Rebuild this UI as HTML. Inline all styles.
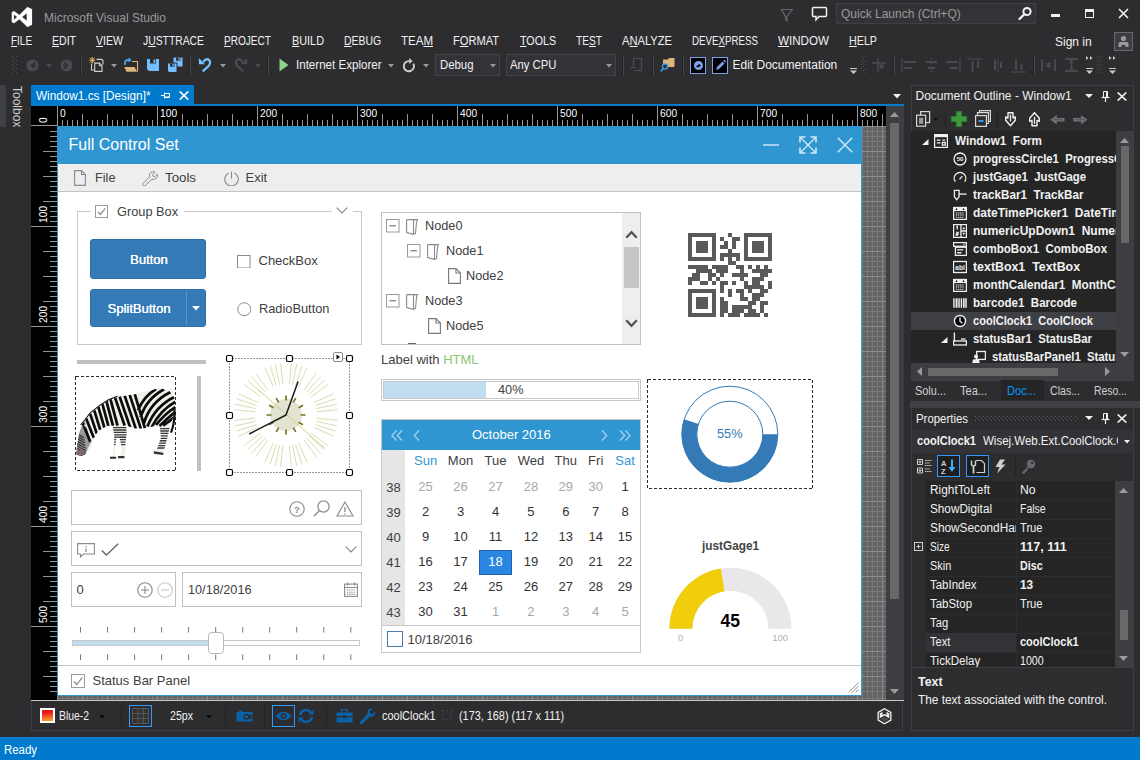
<!DOCTYPE html>
<html lang="en"><head><meta charset="utf-8"><title>Microsoft Visual Studio</title>
<style>
html,body{margin:0;padding:0;background:#2d2d30}
body{width:1140px;height:760px;overflow:hidden;position:relative;font-family:"Liberation Sans",sans-serif}
.a{position:absolute;display:block}
.t{position:absolute;white-space:pre;line-height:1;transform-origin:0 0}
u{text-decoration-thickness:1px;text-underline-offset:1px}
.grip{background-image:radial-gradient(circle at 0.500px 0.500px,#505055 0.500px,transparent 0.800px),radial-gradient(circle at 2.500px 2.500px,#505055 0.500px,transparent 0.800px);background-size:4px 4px}
.grip2{background-image:radial-gradient(circle at 0.500px 0.500px,#5c5c62 0.500px,transparent 0.800px),radial-gradient(circle at 2.500px 2.500px,#5c5c62 0.500px,transparent 0.800px);background-size:4px 4px}
.gridbg{background-color:#636363;background-image:linear-gradient(90deg,#8c8c8c 1px,transparent 1px),linear-gradient(#8c8c8c 1px,transparent 1px),linear-gradient(#787878 1px,transparent 1px),linear-gradient(90deg,#787878 1px,transparent 1px);background-size:25px 25px,25px 25px,5px 5px,5px 5px}
</style></head>
<body>
<svg class="a" style="left:11px;top:6px;" width="22" height="22" viewBox="0 0 22 22"><path fill="#ffffff" fill-rule="evenodd" stroke="#ffffff" stroke-width="0.200" stroke-linejoin="round" d="M16.400 0.900 21 3.200V18.700L16.400 21 8.400 13.200 2.900 17.200 0.800 16.100V6.400L2.900 5.100 8.400 9ZM2.900 8.500V13.900L6.100 11.100ZM15.800 7.200V14.800L11.100 11.100Z"/></svg>
<span class="t" style="left:44px;top:11px;font-size:13px;color:#999999;transform:scaleX(0.924);">Microsoft Visual Studio</span>
<svg class="a" style="left:779px;top:8px;" width="14" height="14" viewBox="0 0 14 14"><path d="M1.5 1.5H12.5L7 8.5V13L5.5 11.5V8.5Z" fill="none" stroke="#6a6a6e" stroke-width="1.1" transform="translate(1,0)"/></svg>
<svg class="a" style="left:811px;top:6px;" width="17" height="16" viewBox="0 0 17 16"><path d="M2.5 1.5H14.5Q15.5 1.5 15.5 2.5V9.5Q15.5 10.5 14.5 10.5H8L5 13.8V10.5H2.5Q1.5 10.5 1.5 9.5V2.5Q1.5 1.5 2.5 1.5Z" fill="none" stroke="#f1f1f1" stroke-width="1.5"/></svg>
<div class="a" style="left:836px;top:3px;width:200px;height:21px;background:#333337;border:1px solid #3f3f46;box-sizing:border-box;"></div>
<span class="t" style="left:841px;top:8px;font-size:12px;color:#999999;">Quick Launch (Ctrl+Q)</span>
<svg class="a" style="left:1017px;top:6px;" width="16" height="16" viewBox="0 0 16 16"><circle cx="10" cy="5.5" r="3.6" fill="none" stroke="#f1f1f1" stroke-width="2"/><path d="M7.5 8 2.5 13" stroke="#f1f1f1" stroke-width="2.4" stroke-linecap="round"/></svg>
<div class="a" style="left:1051px;top:14px;width:9px;height:3px;background:#f1f1f1;"></div>
<div class="a" style="left:1085px;top:9px;width:9px;height:9px;border:1px solid #f1f1f1;border-top:3px solid #f1f1f1;box-sizing:border-box;"></div>
<svg class="a" style="left:1118px;top:8px;" width="11" height="11" viewBox="0 0 11 11"><path d="M1 1 10 10M10 1 1 10" stroke="#f1f1f1" stroke-width="1.6"/></svg>
<span class="t" style="left:11px;top:35px;font-size:12px;color:#f1f1f1;transform:scaleX(0.829);"><u>F</u>ILE</span>
<span class="t" style="left:52px;top:35px;font-size:12px;color:#f1f1f1;transform:scaleX(0.878);"><u>E</u>DIT</span>
<span class="t" style="left:96px;top:35px;font-size:12px;color:#f1f1f1;transform:scaleX(0.880);"><u>V</u>IEW</span>
<span class="t" style="left:143px;top:35px;font-size:12px;color:#f1f1f1;transform:scaleX(0.863);">J<u>U</u>STTRACE</span>
<span class="t" style="left:224px;top:35px;font-size:12px;color:#f1f1f1;transform:scaleX(0.839);"><u>P</u>ROJECT</span>
<span class="t" style="left:292px;top:35px;font-size:12px;color:#f1f1f1;transform:scaleX(0.905);"><u>B</u>UILD</span>
<span class="t" style="left:344px;top:35px;font-size:12px;color:#f1f1f1;transform:scaleX(0.867);"><u>D</u>EBUG</span>
<span class="t" style="left:401px;top:35px;font-size:12px;color:#f1f1f1;transform:scaleX(0.960);">TEA<u>M</u></span>
<span class="t" style="left:453px;top:35px;font-size:12px;color:#f1f1f1;transform:scaleX(0.924);">F<u>O</u>RMAT</span>
<span class="t" style="left:520px;top:35px;font-size:12px;color:#f1f1f1;transform:scaleX(0.890);"><u>T</u>OOLS</span>
<span class="t" style="left:576px;top:35px;font-size:12px;color:#f1f1f1;transform:scaleX(0.848);">TE<u>S</u>T</span>
<span class="t" style="left:622px;top:35px;font-size:12px;color:#f1f1f1;transform:scaleX(0.929);">A<u>N</u>ALYZE</span>
<span class="t" style="left:692px;top:35px;font-size:12px;color:#f1f1f1;transform:scaleX(0.811);">DEVE<u>X</u>PRESS</span>
<span class="t" style="left:778px;top:35px;font-size:12px;color:#f1f1f1;transform:scaleX(0.969);"><u>W</u>INDOW</span>
<span class="t" style="left:849px;top:35px;font-size:12px;color:#f1f1f1;transform:scaleX(0.893);"><u>H</u>ELP</span>
<span class="t" style="left:1055px;top:36px;font-size:12px;color:#f1f1f1;">Sign in</span>
<div class="a" style="left:1114px;top:32px;width:19px;height:19px;background:#3e3e42;border:1px solid #6a6a6e;box-sizing:border-box;"></div>
<svg class="a" style="left:1116px;top:34px;" width="15" height="15" viewBox="0 0 15 15"><circle cx="7.5" cy="4.5" r="2.6" fill="#9a9a9e"/><path d="M2.5 13V9.5Q2.5 8 4 8H11Q12.5 8 12.5 9.5V13H9.5V11H5.5V13Z" fill="#9a9a9e"/></svg>
<div class="a grip" style="left:12px;top:56px;width:5px;height:18px"></div>
<svg class="a" style="left:25.5px;top:58.5px;" width="13" height="13" viewBox="0 0 13 13"><circle cx="6.5" cy="6.5" r="6" fill="#4b4b4f"/><path d="M9 3.5 5.5 6.5 9 9.5M5.8 6.5H10" stroke="#2d2d30" stroke-width="1.6" fill="none"/></svg>
<svg class="a" style="left:59.5px;top:58.5px;" width="13" height="13" viewBox="0 0 13 13"><circle cx="6.5" cy="6.5" r="6" fill="#4b4b4f"/><path d="M4 3.5 7.5 6.5 4 9.5M7.2 6.5H3" stroke="#2d2d30" stroke-width="1.6" fill="none"/></svg>
<svg class="a" style="left:46px;top:64px;" width="6" height="3.5" viewBox="0 0 6 3.5"><path d="M0 0H6L3.0 3.5Z" fill="#4b4b4f"/></svg>
<div class="a" style="left:80px;top:55px;width:1px;height:20px;background:#222224;"></div><div class="a" style="left:81px;top:55px;width:1px;height:20px;background:#46464a;"></div>
<svg class="a" style="left:89px;top:57px;" width="16" height="16" viewBox="0 0 16 16"><path d="M1 0.700 5.500 5.700M5.500 0.700 1 5.700M3.250 0V6.400M0.300 3.200H6.200" stroke="#e8b860" stroke-width="1"/><path d="M7.500 2.400H12Q14 2.400 14 4.400V7.500" stroke="#d0d0d0" fill="none" stroke-width="1.100"/><path d="M2.500 6.500V13H5" stroke="#d0d0d0" fill="none" stroke-width="1.100"/><path d="M5.700 6.100H10.500L13 8.600V14.400H5.700Z" fill="#2d2d30" stroke="#d0d0d0" stroke-width="1.100"/><path d="M10.300 6.100V8.800H13" fill="none" stroke="#d0d0d0" stroke-width="1"/></svg>
<svg class="a" style="left:111px;top:64px;" width="6" height="3.5" viewBox="0 0 6 3.5"><path d="M0 0H6L3.0 3.5Z" fill="#999999"/></svg>
<svg class="a" style="left:123px;top:57px;" width="16" height="16" viewBox="0 0 16 16"><path d="M9 4.500H14.500V14.500" fill="none" stroke="#dcb67a" stroke-width="1.100"/><path d="M1.300 10H11.500L14.200 14.800H3.600Z" fill="#dcb67a"/><path d="M2 7.800Q1.300 3.200 5 3H6.500" fill="none" stroke="#4aa5ee" stroke-width="1.800"/><path d="M5.500 0.400 8.700 3 5.500 5.600Z" fill="#4aa5ee"/></svg>
<svg class="a" style="left:146px;top:58px;" width="14" height="14" viewBox="0 0 14 14"><path d="M1 1H13V13H3L1 11Z" fill="#75beff"/><rect x="4" y="1" width="6" height="4.5" fill="#2d2d30"/><rect x="7.5" y="1.6" width="1.8" height="3.2" fill="#75beff"/></svg>
<svg class="a" style="left:167px;top:57px;" width="16" height="16" viewBox="0 0 16 16"><path d="M6.5 0.5H15.5V9.5H8L6.5 8Z" fill="#75beff"/><rect x="9" y="0.5" width="4.5" height="3.2" fill="#2d2d30"/><rect x="11.5" y="1" width="1.3" height="2.2" fill="#75beff"/><path d="M0.5 6H10V15.500H2L0.500 14Z" fill="#75beff" stroke="#2d2d30" stroke-width="1"/><rect x="3" y="6.500" width="4.500" height="3.200" fill="#2d2d30"/><rect x="5.500" y="7" width="1.300" height="2.200" fill="#75beff"/></svg>
<div class="a" style="left:189px;top:55px;width:1px;height:20px;background:#222224;"></div><div class="a" style="left:190px;top:55px;width:1px;height:20px;background:#46464a;"></div>
<svg class="a" style="left:197px;top:57px;" width="15" height="16" viewBox="0 0 15 16"><path d="M1.900 1V7.200H8.200Z" fill="#75beff"/><path d="M6.200 4.800Q8.500 1.600 11.300 2.400Q14.600 4.200 12 8.500L5.800 14.300" fill="none" stroke="#75beff" stroke-width="2.300"/></svg>
<svg class="a" style="left:220px;top:64px;" width="6" height="3.5" viewBox="0 0 6 3.5"><path d="M0 0H6L3.0 3.5Z" fill="#999999"/></svg>
<svg class="a" style="left:233.5px;top:57px;" width="15" height="16" viewBox="0 0 15 16"><g transform="translate(15,0) scale(-1,1)"><path d="M1.900 1V7.200H8.200Z" fill="#4b4b4f"/><path d="M6.200 4.800Q8.500 1.600 11.300 2.400Q14.600 4.200 12 8.500L5.800 14.300" fill="none" stroke="#4b4b4f" stroke-width="2.300"/></g></svg>
<svg class="a" style="left:255px;top:64px;" width="6" height="3.5" viewBox="0 0 6 3.5"><path d="M0 0H6L3.0 3.5Z" fill="#4b4b4f"/></svg>
<div class="a" style="left:267px;top:55px;width:1px;height:20px;background:#222224;"></div><div class="a" style="left:268px;top:55px;width:1px;height:20px;background:#46464a;"></div>
<svg class="a" style="left:279px;top:58px;" width="10" height="14" viewBox="0 0 10 14"><path d="M0.500 0.500 9.500 7 0.500 13.500Z" fill="#8ad48a"/></svg>
<span class="t" style="left:296px;top:59px;font-size:12px;color:#f1f1f1;transform:scaleX(0.964);">Internet Explorer</span>
<svg class="a" style="left:388px;top:64px;" width="6" height="3.5" viewBox="0 0 6 3.5"><path d="M0 0H6L3.0 3.5Z" fill="#999999"/></svg>
<svg class="a" style="left:402px;top:57px;" width="14" height="16" viewBox="0 0 14 16"><path d="M11.300 6.650A5.100 5.100 0 1 1 7.200 4.100" fill="none" stroke="#d0d0d0" stroke-width="1.900"/><path d="M7.200 0.900V7L10.600 4Z" fill="#d0d0d0"/></svg>
<svg class="a" style="left:423px;top:64px;" width="6" height="3.5" viewBox="0 0 6 3.5"><path d="M0 0H6L3.0 3.5Z" fill="#999999"/></svg>
<div class="a" style="left:435px;top:54px;width:65px;height:22px;background:#333337;border:1px solid #434346;box-sizing:border-box;"></div>
<span class="t" style="left:440px;top:59px;font-size:12px;color:#f1f1f1;transform:scaleX(0.947);">Debug</span>
<svg class="a" style="left:490px;top:64px;" width="6" height="3.5" viewBox="0 0 6 3.5"><path d="M0 0H6L3.0 3.5Z" fill="#999999"/></svg>
<div class="a" style="left:506px;top:54px;width:110px;height:22px;background:#333337;border:1px solid #434346;box-sizing:border-box;"></div>
<span class="t" style="left:510px;top:59px;font-size:12px;color:#f1f1f1;transform:scaleX(0.942);">Any CPU</span>
<svg class="a" style="left:606px;top:64px;" width="6" height="3.5" viewBox="0 0 6 3.5"><path d="M0 0H6L3.0 3.5Z" fill="#999999"/></svg>
<div class="a" style="left:622px;top:55px;width:1px;height:20px;background:#222224;"></div><div class="a" style="left:623px;top:55px;width:1px;height:20px;background:#46464a;"></div>
<svg class="a" style="left:630px;top:57px;" width="14" height="16" viewBox="0 0 14 16"><path d="M3.500 9V1.500H11.500V14" fill="none" stroke="#4b4b4f" stroke-width="1.200"/><path d="M1 10.500H6M3 8.500 1 10.500 3 12.500M4 13.500H11M9 11.500 11 13.500 9 15.500" fill="none" stroke="#4b4b4f" stroke-width="1"/></svg>
<div class="a" style="left:652px;top:55px;width:1px;height:20px;background:#222224;"></div><div class="a" style="left:653px;top:55px;width:1px;height:20px;background:#46464a;"></div>
<svg class="a" style="left:660px;top:57px;" width="16" height="16" viewBox="0 0 16 16"><path d="M3 2.500H8L9 1H14.500V10H3Z" fill="#dcb67a"/><circle cx="5" cy="9.500" r="2.600" fill="#2d2d30" stroke="#3b9aec" stroke-width="1.400"/><path d="M3.200 11.500 0.800 14.500" stroke="#3b9aec" stroke-width="1.600"/></svg>
<div class="a" style="left:682px;top:55px;width:1px;height:20px;background:#222224;"></div><div class="a" style="left:683px;top:55px;width:1px;height:20px;background:#46464a;"></div>
<div class="a" style="left:690px;top:57px;width:16px;height:17px;background:#000;border:1px solid #7d9eea;box-sizing:border-box;"></div>
<svg class="a" style="left:689.5px;top:57px;" width="17" height="17" viewBox="0 0 17 17"><circle cx="8.500" cy="8.500" r="4.500" fill="#7d9eea"/><path d="M6 9.500 9.500 7 11 8.500 8 10.500Z" fill="#000"/></svg>
<div class="a" style="left:712px;top:57px;width:16px;height:17px;background:#000;border:1px solid #7d9eea;box-sizing:border-box;"></div>
<svg class="a" style="left:711.5px;top:57px;" width="17" height="17" viewBox="0 0 17 17"><path d="M4 13 5 10 10.500 4.500 12.500 6.500 7 12Z" fill="#7d9eea"/><path d="M11.200 3.800 12.200 2.800 14.200 4.800 13.200 5.800Z" fill="#7d9eea"/></svg>
<span class="t" style="left:732.5px;top:59px;font-size:12px;color:#f1f1f1;">Edit Documentation</span>
<svg class="a" style="left:850px;top:68px;" width="7" height="6" viewBox="0 0 7 6"><path d="M0 0H7V1H0ZM0 2.500H7L3.500 6Z" fill="#c8c8c8"/></svg>
<div class="a grip" style="left:861px;top:56px;width:5px;height:18px"></div>
<svg class="a" style="left:872px;top:57px;" width="15" height="16" viewBox="0 0 15 16"><path d="M6 1V15M0 6H14" stroke="#4b4b4f" stroke-width="1.500"/><rect x="7.500" y="7.500" width="4" height="4" fill="#4b4b4f"/></svg>
<div class="a" style="left:893px;top:55px;width:1px;height:20px;background:#222224;"></div><div class="a" style="left:894px;top:55px;width:1px;height:20px;background:#46464a;"></div>
<svg class="a" style="left:901px;top:57px;" width="15" height="16" viewBox="0 0 15 16"><path d="M1 1V15" stroke="#4b4b4f" stroke-width="1.200"/><path d="M3 5H15M3 11H11" stroke="#4b4b4f" stroke-width="2"/></svg>
<svg class="a" style="left:925px;top:57px;" width="15" height="16" viewBox="0 0 15 16"><path d="M1 5H12M3 11H10" stroke="#4b4b4f" stroke-width="2"/><path d="M6.500 1V15" stroke="#4b4b4f" stroke-width="1" stroke-dasharray="2 2"/></svg>
<svg class="a" style="left:946px;top:57px;" width="15" height="16" viewBox="0 0 15 16"><path d="M14 1V15" stroke="#4b4b4f" stroke-width="1.200"/><path d="M0 5H12M4 11H12" stroke="#4b4b4f" stroke-width="2"/></svg>
<svg class="a" style="left:968px;top:57px;" width="15" height="16" viewBox="0 0 15 16"><path d="M0 2H14" stroke="#4b4b4f" stroke-width="1.200"/><path d="M4.500 4V15M10 4V11" stroke="#4b4b4f" stroke-width="2"/></svg>
<svg class="a" style="left:992px;top:57px;" width="12" height="16" viewBox="0 0 12 16"><path d="M3 3V13M9 5V11" stroke="#4b4b4f" stroke-width="2"/><path d="M6 1V15" stroke="#4b4b4f" stroke-width="1"/></svg>
<svg class="a" style="left:1011px;top:57px;" width="15" height="16" viewBox="0 0 15 16"><path d="M0 15H15" stroke="#4b4b4f" stroke-width="1.200"/><path d="M5 3V13M10.500 7V13" stroke="#4b4b4f" stroke-width="2"/></svg>
<div class="a" style="left:1033px;top:55px;width:1px;height:20px;background:#222224;"></div><div class="a" style="left:1034px;top:55px;width:1px;height:20px;background:#46464a;"></div>
<svg class="a" style="left:1041px;top:57px;" width="15" height="16" viewBox="0 0 15 16"><path d="M1 2V14M14 2V14" stroke="#4b4b4f" stroke-width="1.800"/><path d="M7.500 4.500V11.500M4.500 6 10.500 10M10.500 6 4.500 10" stroke="#4b4b4f" stroke-width="1.300"/></svg>
<svg class="a" style="left:1065px;top:57px;" width="15" height="16" viewBox="0 0 15 16"><path d="M0 2H13M0 14H13" stroke="#4b4b4f" stroke-width="1.800"/><path d="M6.500 3V13M4.500 5.500 6.500 3.500 8.500 5.500M4.500 10.500 6.500 12.500 8.500 10.500" stroke="#4b4b4f" stroke-width="1.200" fill="none"/></svg>
<svg class="a" style="left:1086px;top:56px;" width="7" height="18" viewBox="0 0 7 18"><path d="M0 0 2.500 2 0 4ZM4 0 6.500 2 4 4Z" fill="#c8c8c8"/><path d="M0 12H7V13H0ZM0 14.500H7L3.500 18Z" fill="#c8c8c8"/></svg>
<svg class="a" style="left:1109px;top:56px;" width="7" height="18" viewBox="0 0 7 18"><path d="M0 0 2.500 2 0 4ZM4 0 6.500 2 4 4Z" fill="#c8c8c8"/><path d="M0 12H7V13H0ZM0 14.500H7L3.500 18Z" fill="#c8c8c8"/></svg>
<div class="a grip" style="left:1097px;top:56px;width:5px;height:18px"></div>
<div class="a" style="left:0px;top:85px;width:6px;height:42px;background:#3f3f46;"></div>
<span class="t" style="left:22.5px;top:86px;font-size:12px;color:#d0d0d0;transform:rotate(90deg);transform-origin:0 0;line-height:12px">Toolbox</span>
<div class="a" style="left:31px;top:85px;width:163px;height:19px;background:#007acc;"></div>
<div class="a" style="left:31px;top:104px;width:873px;height:2px;background:#007acc;"></div>
<span class="t" style="left:35.5px;top:90px;font-size:12px;color:#ffffff;transform:scaleX(0.981);">Window1.cs [Design]*</span>
<svg class="a" style="left:161px;top:91px;" width="9" height="9" viewBox="0 0 9 9"><path d="M0 4.500H3M3.500 1.500V7.500M3.500 2.500H8.500V6H3.500M3.500 6.500H8.500" stroke="#fff" stroke-width="1" fill="none"/></svg>
<svg class="a" style="left:179px;top:90.5px;" width="10" height="9" viewBox="0 0 10 9"><path d="M0.700 0.500 9.300 8.500M9.300 0.500 0.700 8.500" stroke="#fff" stroke-width="1.700"/></svg>
<svg class="a" style="left:893px;top:94px;" width="8" height="4.5" viewBox="0 0 8 4.5"><path d="M0 0H8L4 4.500Z" fill="#f1f1f1"/></svg>
<div class="a" style="left:31px;top:106px;width:855px;height:20px;background:#000;"></div>
<div class="a" style="left:31px;top:126px;width:26px;height:574px;background:#000;"></div>
<svg class="a" style="left:31px;top:106px;" width="855" height="20" viewBox="0 0 855 20"><path d="M26.5 0V20M31.5 14V20M36.5 14V20M41.5 14V20M46.5 14V20M51.5 8V20M56.5 14V20M61.5 14V20M66.5 14V20M71.5 14V20M76.5 8V20M81.5 14V20M86.5 14V20M91.5 14V20M96.5 14V20M101.5 8V20M106.5 14V20M111.5 14V20M116.5 14V20M121.5 14V20M126.5 0V20M131.5 14V20M136.5 14V20M141.5 14V20M146.5 14V20M151.5 8V20M156.5 14V20M161.5 14V20M166.5 14V20M171.5 14V20M176.5 8V20M181.5 14V20M186.5 14V20M191.5 14V20M196.5 14V20M201.5 8V20M206.5 14V20M211.5 14V20M216.5 14V20M221.5 14V20M226.5 0V20M231.5 14V20M236.5 14V20M241.5 14V20M246.5 14V20M251.5 8V20M256.5 14V20M261.5 14V20M266.5 14V20M271.5 14V20M276.5 8V20M281.5 14V20M286.5 14V20M291.5 14V20M296.5 14V20M301.5 8V20M306.5 14V20M311.5 14V20M316.5 14V20M321.5 14V20M326.5 0V20M331.5 14V20M336.5 14V20M341.5 14V20M346.5 14V20M351.5 8V20M356.5 14V20M361.5 14V20M366.5 14V20M371.5 14V20M376.5 8V20M381.5 14V20M386.5 14V20M391.5 14V20M396.5 14V20M401.5 8V20M406.5 14V20M411.5 14V20M416.5 14V20M421.5 14V20M426.5 0V20M431.5 14V20M436.5 14V20M441.5 14V20M446.5 14V20M451.5 8V20M456.5 14V20M461.5 14V20M466.5 14V20M471.5 14V20M476.5 8V20M481.5 14V20M486.5 14V20M491.5 14V20M496.5 14V20M501.5 8V20M506.5 14V20M511.5 14V20M516.5 14V20M521.5 14V20M526.5 0V20M531.5 14V20M536.5 14V20M541.5 14V20M546.5 14V20M551.5 8V20M556.5 14V20M561.5 14V20M566.5 14V20M571.5 14V20M576.5 8V20M581.5 14V20M586.5 14V20M591.5 14V20M596.5 14V20M601.5 8V20M606.5 14V20M611.5 14V20M616.5 14V20M621.5 14V20M626.5 0V20M631.5 14V20M636.5 14V20M641.5 14V20M646.5 14V20M651.5 8V20M656.5 14V20M661.5 14V20M666.5 14V20M671.5 14V20M676.5 8V20M681.5 14V20M686.5 14V20M691.5 14V20M696.5 14V20M701.5 8V20M706.5 14V20M711.5 14V20M716.5 14V20M721.5 14V20M726.5 0V20M731.5 14V20M736.5 14V20M741.5 14V20M746.5 14V20M751.5 8V20M756.5 14V20M761.5 14V20M766.5 14V20M771.5 14V20M776.5 8V20M781.5 14V20M786.5 14V20M791.5 14V20M796.5 14V20M801.5 8V20M806.5 14V20M811.5 14V20M816.5 14V20M821.5 14V20M826.5 0V20M831.5 14V20M836.5 14V20M841.5 14V20M846.5 14V20M851.5 8V20" stroke="#969696" stroke-width="1" shape-rendering="crispEdges"/></svg>
<span class="t" style="left:60px;top:108px;font-size:11px;color:#ffffff;transform:scaleX(0.930);">0</span>
<span class="t" style="left:160px;top:108px;font-size:11px;color:#ffffff;transform:scaleX(0.930);">100</span>
<span class="t" style="left:260px;top:108px;font-size:11px;color:#ffffff;transform:scaleX(0.930);">200</span>
<span class="t" style="left:360px;top:108px;font-size:11px;color:#ffffff;transform:scaleX(0.930);">300</span>
<span class="t" style="left:460px;top:108px;font-size:11px;color:#ffffff;transform:scaleX(0.930);">400</span>
<span class="t" style="left:560px;top:108px;font-size:11px;color:#ffffff;transform:scaleX(0.930);">500</span>
<span class="t" style="left:660px;top:108px;font-size:11px;color:#ffffff;transform:scaleX(0.930);">600</span>
<span class="t" style="left:760px;top:108px;font-size:11px;color:#ffffff;transform:scaleX(0.930);">700</span>
<span class="t" style="left:860px;top:108px;font-size:11px;color:#ffffff;transform:scaleX(0.930);">800</span>
<div class="a" style="left:31px;top:125px;width:26px;height:1px;background:#969696;"></div>
<svg class="a" style="left:31px;top:126px;" width="26" height="574" viewBox="0 0 26 574"><path d="M19 5.5H26M19 10.5H26M19 15.5H26M19 20.5H26M12 25.5H26M19 30.5H26M19 35.5H26M19 40.5H26M19 45.5H26M12 50.5H26M19 55.5H26M19 60.5H26M19 65.5H26M19 70.5H26M12 75.5H26M19 80.5H26M19 85.5H26M19 90.5H26M19 95.5H26M0 100.5H26M19 105.5H26M19 110.5H26M19 115.5H26M19 120.5H26M12 125.5H26M19 130.5H26M19 135.5H26M19 140.5H26M19 145.5H26M12 150.5H26M19 155.5H26M19 160.5H26M19 165.5H26M19 170.5H26M12 175.5H26M19 180.5H26M19 185.5H26M19 190.5H26M19 195.5H26M0 200.5H26M19 205.5H26M19 210.5H26M19 215.5H26M19 220.5H26M12 225.5H26M19 230.5H26M19 235.5H26M19 240.5H26M19 245.5H26M12 250.5H26M19 255.5H26M19 260.5H26M19 265.5H26M19 270.5H26M12 275.5H26M19 280.5H26M19 285.5H26M19 290.5H26M19 295.5H26M0 300.5H26M19 305.5H26M19 310.5H26M19 315.5H26M19 320.5H26M12 325.5H26M19 330.5H26M19 335.5H26M19 340.5H26M19 345.5H26M12 350.5H26M19 355.5H26M19 360.5H26M19 365.5H26M19 370.5H26M12 375.5H26M19 380.5H26M19 385.5H26M19 390.5H26M19 395.5H26M0 400.5H26M19 405.5H26M19 410.5H26M19 415.5H26M19 420.5H26M12 425.5H26M19 430.5H26M19 435.5H26M19 440.5H26M19 445.5H26M12 450.5H26M19 455.5H26M19 460.5H26M19 465.5H26M19 470.5H26M12 475.5H26M19 480.5H26M19 485.5H26M19 490.5H26M19 495.5H26M0 500.5H26M19 505.5H26M19 510.5H26M19 515.5H26M19 520.5H26M12 525.5H26M19 530.5H26M19 535.5H26M19 540.5H26M19 545.5H26M12 550.5H26M19 555.5H26M19 560.5H26M19 565.5H26" stroke="#969696" stroke-width="1" shape-rendering="crispEdges"/></svg>
<span class="t" style="left:38px;top:123px;font-size:11px;color:#fff;transform:rotate(-90deg) scaleX(0.93);transform-origin:0 0;line-height:11px">0</span>
<span class="t" style="left:38px;top:223px;font-size:11px;color:#fff;transform:rotate(-90deg) scaleX(0.93);transform-origin:0 0;line-height:11px">100</span>
<span class="t" style="left:38px;top:323px;font-size:11px;color:#fff;transform:rotate(-90deg) scaleX(0.93);transform-origin:0 0;line-height:11px">200</span>
<span class="t" style="left:38px;top:423px;font-size:11px;color:#fff;transform:rotate(-90deg) scaleX(0.93);transform-origin:0 0;line-height:11px">300</span>
<span class="t" style="left:38px;top:523px;font-size:11px;color:#fff;transform:rotate(-90deg) scaleX(0.93);transform-origin:0 0;line-height:11px">400</span>
<span class="t" style="left:38px;top:623px;font-size:11px;color:#fff;transform:rotate(-90deg) scaleX(0.93);transform-origin:0 0;line-height:11px">500</span>
<div class="a gridbg" style="left:862px;top:126px;width:24px;height:574px;background-position:20px 0,0 0,0 0,0 0"></div>
<div class="a gridbg" style="left:57px;top:696px;width:829px;height:4px;background-position:0 0,0 12px,0 2px,0 0"></div>
<div class="a" style="left:886px;top:106px;width:18px;height:594px;background:#3e3e42;"></div>
<svg class="a" style="left:890px;top:112px;" width="9" height="5" viewBox="0 0 9 5"><path d="M0 5H9L4.500 0Z" fill="#999"/></svg>
<svg class="a" style="left:890px;top:689px;" width="9" height="5" viewBox="0 0 9 5"><path d="M0 0H9L4.500 5Z" fill="#999"/></svg>
<div class="a" style="left:890px;top:123px;width:9px;height:476px;background:#686868;"></div>
<div class="a" style="left:57px;top:126px;width:805px;height:570px;background:#ffffff;border:1px solid #3096d1;box-sizing:border-box;"></div>
<div class="a" style="left:57px;top:126px;width:805px;height:38px;background:#3096d1;"></div>
<span class="t" style="left:68.5px;top:137px;font-size:16px;color:#ffffff;">Full Control Set</span>
<div class="a" style="left:763px;top:144px;width:16px;height:2px;background:#a6d1ed;"></div>
<svg class="a" style="left:799px;top:136px;" width="18" height="18" viewBox="0 0 18 18"><path d="M1.500 1.500 16.500 16.500M16.500 1.500 1.500 16.500" stroke="#d4eaf7" stroke-width="1.300"/><path d="M1 6.500V1H6.500M11.500 1H17V6.500M17 11.500V17H11.500M6.500 17H1V11.500" fill="none" stroke="#d4eaf7" stroke-width="1.600"/></svg>
<svg class="a" style="left:837px;top:137px;" width="16" height="16" viewBox="0 0 16 16"><path d="M0.800 0.800 15.200 15.200M15.200 0.800 0.800 15.200" stroke="#d4eaf7" stroke-width="1.400"/></svg>
<div class="a" style="left:58px;top:164px;width:803px;height:27px;background:#eeeeee;"></div>
<div class="a" style="left:58px;top:191px;width:803px;height:1px;background:#c4c4c4;"></div>
<svg class="a" style="left:74px;top:170px;" width="12" height="16" viewBox="0 0 12 16"><path d="M0.600 0.600H7.500L11.400 4.500V15.400H0.600Z" fill="none" stroke="#8a8a8a" stroke-width="1.100"/><path d="M7.500 0.600V4.500H11.400" fill="none" stroke="#8a8a8a" stroke-width="1.100"/></svg>
<span class="t" style="left:94.5px;top:171px;font-size:13px;color:#404040;transform:scaleX(0.979);">File</span>
<svg class="a" style="left:142px;top:170.5px;" width="16" height="15.5" viewBox="0 0 18 17"><path d="M1.200 15.800Q0.200 14.800 1.200 13.800L8.500 6.500Q7.500 3 10 1.300Q12.300 0 14.800 1L12 3.800 12.500 5.800 14.500 6.300 17.200 3.500Q18 6 16.200 8Q14 9.800 11.200 9L3.500 16.300Q2.200 17 1.200 15.800Z" fill="none" stroke="#8a8a8a" stroke-width="1.100"/></svg>
<span class="t" style="left:164.5px;top:171px;font-size:13px;color:#404040;transform:scaleX(1.022);">Tools</span>
<svg class="a" style="left:223.5px;top:170.5px;" width="15" height="15" viewBox="0 0 16 16"><path d="M5 2.200A7.200 7.200 0 1 0 11 2.200" fill="none" stroke="#8a8a8a" stroke-width="1.200"/><path d="M8 0.500V8" stroke="#8a8a8a" stroke-width="1.200"/></svg>
<span class="t" style="left:245.5px;top:171px;font-size:13px;color:#404040;">Exit</span>
<div class="a" style="left:77px;top:211px;width:285px;height:134px;border:1px solid #c8c8c8;box-sizing:border-box;"></div>
<div class="a" style="left:91px;top:210px;width:93px;height:3px;background:#fff;"></div>
<div class="a" style="left:331.5px;top:210px;width:21px;height:3px;background:#fff;"></div>
<svg class="a" style="left:95px;top:204.5px;" width="13" height="13" viewBox="0 0 13 13"><rect x="0.500" y="0.500" width="12" height="12" fill="#fff" stroke="#9a9a9a"/><path d="M3 6.8 5.3 9.5 10.3 3.300" fill="none" stroke="#8a8a8a" stroke-width="1.200"/></svg>
<span class="t" style="left:117px;top:205px;font-size:13px;color:#404040;transform:scaleX(0.982);">Group Box</span>
<svg class="a" style="left:336px;top:207px;" width="12" height="7" viewBox="0 0 12 7"><path d="M0.700 0.700 6 6 11.300 0.700" fill="none" stroke="#8a8a8a" stroke-width="1.200"/></svg>
<div class="a" style="left:90px;top:239px;width:116px;height:40px;background:#337ab7;border-radius:3px;border:1px solid #2e6da4;box-sizing:border-box;"></div>
<span class="t" style="left:130px;top:253px;font-size:13px;color:#ffffff;text-shadow:0.300px 0 0 #fff;">Button</span>
<div class="a" style="left:90px;top:289px;width:116px;height:38px;background:#337ab7;border-radius:3px;border:1px solid #2e6da4;box-sizing:border-box;"></div>
<div class="a" style="left:186px;top:290px;width:1px;height:36px;background:#5a93c6;"></div>
<span class="t" style="left:107.5px;top:302px;font-size:13px;color:#ffffff;text-shadow:0.300px 0 0 #fff;">SplitButton</span>
<svg class="a" style="left:192px;top:306px;" width="8" height="4.5" viewBox="0 0 8 4.5"><path d="M0 0H8L4 4.500Z" fill="#fff"/></svg>
<svg class="a" style="left:237px;top:254.5px;" width="13.5" height="13.5" viewBox="0 0 13.5 13.5"><rect x="0.500" y="0.500" width="12.5" height="12.5" fill="#fff" stroke="#8a8a8a"/></svg>
<span class="t" style="left:258.5px;top:254px;font-size:13px;color:#404040;">CheckBox</span>
<svg class="a" style="left:236.5px;top:302px;" width="14.5" height="14.5" viewBox="0 0 14.5 14.5"><circle cx="7.250" cy="7.250" r="6.500" fill="#fff" stroke="#8a8a8a"/></svg>
<span class="t" style="left:258.5px;top:302px;font-size:13px;color:#404040;transform:scaleX(0.985);">RadioButton</span>
<div class="a" style="left:77px;top:359.5px;width:129px;height:4.5px;background:#c0c0c0;"></div>
<div class="a" style="left:197px;top:376px;width:4px;height:95px;background:#c0c0c0;"></div>
<svg class="a" style="left:75px;top:376px;" width="101" height="95" viewBox="0 0 101 95"><rect x="0.500" y="0.500" width="100" height="94" fill="none" stroke="#2a2a2a" stroke-width="1" stroke-dasharray="3 2" shape-rendering="crispEdges"/></svg>
<svg class="a" style="left:75px;top:385px;" width="102" height="77" viewBox="0 0 1007 760"><defs><clipPath id="zb"><path d="M10 640L22 590L40 480L60 400L100 345L150 280L250 200L330 150L420 115L600 88L760 50L830 30L930 55L985 130L992 250L965 330L935 420L912 520L885 620L868 668L872 690L785 682L780 655L812 628L848 520L838 420L800 400L700 432L600 432L505 402L510 480L497 580L503 650L488 700L488 722L425 722L428 700L455 690L458 600L440 520L410 520L398 600L392 700L405 712L405 728L345 728L350 708L372 700L385 600L388 500L372 405L330 402L230 452L182 540L152 620L95 692L60 705L20 690Z"/></clipPath></defs><path d="M10 640L22 590L40 480L60 400L100 345L150 280L250 200L330 150L420 115L600 88L760 50L830 30L930 55L985 130L992 250L965 330L935 420L912 520L885 620L868 668L872 690L785 682L780 655L812 628L848 520L838 420L800 400L700 432L600 432L505 402L510 480L497 580L503 650L488 700L488 722L425 722L428 700L455 690L458 600L440 520L410 520L398 600L392 700L405 712L405 728L345 728L350 708L372 700L385 600L388 500L372 405L330 402L230 452L182 540L152 620L95 692L60 705L20 690Z" fill="#f0f0ea"/><g clip-path="url(#zb)" fill="none"><path d="M10 640L40 470L95 350L160 560L95 692Z" fill="#9a9a9a"/><path d="M75 370L150 560M110 330L185 520M150 285L215 480M190 250L250 445M230 215L290 420M270 185L330 405M310 160L375 400M350 140L420 400M395 125L490 400M440 112L545 420M490 105L600 430M540 97L650 430M590 90L690 425M622 250Q680 110 800 40M648 320Q700 140 880 42M680 380Q740 170 945 70M715 410Q790 210 985 115M757 415Q840 250 992 165M800 395Q885 285 995 215M835 405Q905 335 990 265M870 400Q930 360 985 315" stroke="#0c0c0c" stroke-width="27"/><path d="M790 430H960M790 454H960M790 478H960M790 502H960M790 526H960M790 550H960M790 574H960M790 598H960M790 622H960M370 420H520M370 444H520M370 468H520M370 492H520M370 516H520M370 540H520M370 564H520M370 588H520M0 470L90 520M4 496L94 546M8 522L98 572M12 548L102 598M16 574L106 624M20 600L110 650M24 626L114 676M28 652L118 702M32 678L122 728" stroke="#3a3a3a" stroke-width="13"/></g><path d="M55 395L100 340L150 276L250 196L330 146L420 111" stroke="#111" stroke-width="10" fill="none"/><path d="M982 240Q990 360 948 470" stroke="#111" stroke-width="22" fill="none"/><ellipse cx="52" cy="668" rx="42" ry="30" fill="#80686a"/><path d="M85 400L105 380L120 430Z" fill="#e8c8d0"/><path d="M345 708h62v20h-62zM425 702h63v20h-63zM778 655l94 14v22l-94-12z" fill="#3a3030"/></svg>
<svg class="a" style="left:0;top:0" width="1140" height="760" viewBox="0 0 1140 760"><path d="M289.2 384.2L291.4 363.3M292.4 384.7L296.8 364.1M295.6 385.5L302.1 365.5M298.6 386.7L307.2 367.5M304.2 389.9L316.6 372.9M306.7 392.0L320.8 376.4M309.0 394.3L324.6 380.2M311.1 396.8L328.1 384.4M314.3 402.4L333.5 393.8M315.5 405.4L335.5 398.9M316.3 408.6L336.9 404.2M316.8 411.8L337.7 409.6M316.8 418.2L337.7 420.4M316.3 421.4L336.9 425.8M315.5 424.6L335.5 431.1M314.3 427.6L333.5 436.2M311.1 433.2L328.1 445.6M309.0 435.7L324.6 449.8M306.7 438.0L320.8 453.6M304.2 440.1L316.6 457.1M298.6 443.3L307.2 462.5M295.6 444.5L302.1 464.5M292.4 445.3L296.8 465.9M289.2 445.8L291.4 466.7M282.8 445.8L280.6 466.7M279.6 445.3L275.2 465.9M276.4 444.5L269.9 464.5M273.4 443.3L264.8 462.5M267.8 440.1L255.4 457.1M265.3 438.0L251.2 453.6M263.0 435.7L247.4 449.8M260.9 433.2L243.9 445.6M257.7 427.6L238.5 436.2M256.5 424.6L236.5 431.1M255.7 421.4L235.1 425.8M255.2 418.2L234.3 420.4M255.2 411.8L234.3 409.6M255.7 408.6L235.1 404.2M256.5 405.4L236.5 398.9M257.7 402.4L238.5 393.8M260.9 396.8L243.9 384.4M263.0 394.3L247.4 380.2M265.3 392.0L251.2 376.4M267.8 389.9L255.4 372.9M273.4 386.7L264.8 367.5M276.4 385.5L269.9 365.5M279.6 384.7L275.2 364.1M282.8 384.2L280.6 363.3" stroke="#cfdba6" stroke-width="0.900"/><circle cx="286" cy="415" r="16" fill="#e3e3d2"/><path d="M286.0 400.5L286.0 395.5M293.2 402.4L295.8 398.1M298.6 407.8L302.9 405.2M300.5 415.0L305.5 415.0M298.6 422.2L302.9 424.8M293.2 427.6L295.8 431.9M286.0 429.5L286.0 434.5M278.8 427.6L276.2 431.9M273.4 422.2L269.1 424.8M271.5 415.0L266.5 415.0M273.4 407.8L269.1 405.2M278.8 402.4L276.2 398.1" stroke="#7a7420" stroke-width="1.700"/><path d="M258.1 389.6L324.7 448.2" stroke="#c3d47c" stroke-width="0.900"/><path d="M298.1 381.6L286 415L249.2 434" stroke="#1a1a1a" stroke-width="1.500" fill="none" stroke-linejoin="round"/><rect x="229.500" y="358.500" width="120" height="114" fill="none" stroke="#333" stroke-width="1" stroke-dasharray="1 2"/><rect x="226.5" y="355.5" width="6" height="6" rx="1.500" fill="#fff" stroke="#000" stroke-width="1.200"/><rect x="226.5" y="412.5" width="6" height="6" rx="1.500" fill="#fff" stroke="#000" stroke-width="1.200"/><rect x="226.5" y="469.5" width="6" height="6" rx="1.500" fill="#fff" stroke="#000" stroke-width="1.200"/><rect x="286.5" y="355.5" width="6" height="6" rx="1.500" fill="#fff" stroke="#000" stroke-width="1.200"/><rect x="286.5" y="469.5" width="6" height="6" rx="1.500" fill="#fff" stroke="#000" stroke-width="1.200"/><rect x="346.5" y="355.5" width="6" height="6" rx="1.500" fill="#fff" stroke="#000" stroke-width="1.200"/><rect x="346.5" y="412.5" width="6" height="6" rx="1.500" fill="#fff" stroke="#000" stroke-width="1.200"/><rect x="346.5" y="469.5" width="6" height="6" rx="1.500" fill="#fff" stroke="#000" stroke-width="1.200"/><rect x="333.500" y="352.500" width="9" height="9" rx="1.500" fill="#fff" stroke="#8a8a78" stroke-width="1"/><path d="M336.500 354.500V359.500L340 357Z" fill="#000"/></svg>
<div class="a" style="left:71px;top:490px;width:291px;height:35px;background:#fff;border:1px solid #c0c0c0;box-sizing:border-box;"></div>
<svg class="a" style="left:289px;top:500.5px;" width="16" height="16" viewBox="0 0 16 16"><circle cx="8" cy="8" r="7.200" fill="none" stroke="#8a8a8a" stroke-width="1.100"/><text x="8" y="11.500" font-size="9.500" font-weight="700" text-anchor="middle" fill="#8a8a8a" font-family="Liberation Sans,sans-serif">?</text></svg>
<svg class="a" style="left:313px;top:500px;" width="17" height="17" viewBox="0 0 17 17"><circle cx="10.500" cy="6.500" r="5.600" fill="none" stroke="#8a8a8a" stroke-width="1.200"/><path d="M6.500 10.500 0.800 16.200" stroke="#8a8a8a" stroke-width="1.300"/></svg>
<svg class="a" style="left:336px;top:500.5px;" width="18" height="16" viewBox="0 0 18 16"><path d="M9 1 17 15H1Z" fill="none" stroke="#8a8a8a" stroke-width="1.100"/><path d="M9 6V11M9 12.200V13.600" stroke="#8a8a8a" stroke-width="1.300"/></svg>
<div class="a" style="left:71px;top:531px;width:291px;height:35px;background:#fff;border:1px solid #c0c0c0;box-sizing:border-box;"></div>
<svg class="a" style="left:77px;top:543px;" width="18" height="15" viewBox="0 0 18 15"><path d="M0.600 0.600H17.400V11H6.500L3.500 14V11H0.600Z" fill="none" stroke="#8a8a8a" stroke-width="1.100"/><path d="M9 3V4.200M9 5.500V9" stroke="#8a8a8a" stroke-width="1.300"/></svg>
<svg class="a" style="left:101px;top:543px;" width="18" height="13" viewBox="0 0 18 13"><path d="M0.800 7.500 5.500 12 17.200 0.800" fill="none" stroke="#666" stroke-width="1.300"/></svg>
<svg class="a" style="left:345px;top:546px;" width="12" height="7" viewBox="0 0 12 7"><path d="M0.700 0.700 6 6 11.300 0.700" fill="none" stroke="#8a8a8a" stroke-width="1.200"/></svg>
<div class="a" style="left:71px;top:572px;width:105px;height:35px;background:#fff;border:1px solid #c0c0c0;box-sizing:border-box;"></div>
<span class="t" style="left:76.5px;top:583px;font-size:13px;color:#404040;">0</span>
<svg class="a" style="left:137px;top:581.5px;" width="16" height="16" viewBox="0 0 16 16"><circle cx="8" cy="8" r="7.200" fill="none" stroke="#8a8a8a" stroke-width="1.100"/><path d="M4 8H12M8 4V12" stroke="#8a8a8a" stroke-width="1.100"/></svg>
<svg class="a" style="left:156.5px;top:581.5px;" width="16" height="16" viewBox="0 0 16 16"><circle cx="8" cy="8" r="7.200" fill="none" stroke="#c8c8c8" stroke-width="1.100"/><path d="M4 8H12" stroke="#c8c8c8" stroke-width="1.100"/></svg>
<div class="a" style="left:182px;top:572px;width:180px;height:35px;background:#fff;border:1px solid #c0c0c0;box-sizing:border-box;"></div>
<span class="t" style="left:188px;top:583px;font-size:13px;color:#404040;transform:scaleX(0.976);">10/18/2016</span>
<svg class="a" style="left:344px;top:582px;" width="14" height="15" viewBox="0 0 14 15"><rect x="0.600" y="2.100" width="12.800" height="12.300" fill="none" stroke="#8a8a8a" stroke-width="1.100"/><path d="M0.600 5.500H13.400M3.500 0.500V3.500M10.500 0.500V3.500" stroke="#8a8a8a" stroke-width="1.100"/><path d="M3 8H11.500M3 10.200H11.500M3 12.400H11.500" stroke="#8a8a8a" stroke-width="1.100" stroke-dasharray="1.200 1"/></svg>
<svg class="a" style="left:71px;top:626.5px;" width="292" height="33" viewBox="0 0 292 33"><path d="M9.5 0V5.500M9.5 27.500V33M36.5 0V5.500M36.5 27.500V33M63.6 0V5.500M63.6 27.500V33M90.6 0V5.500M90.6 27.500V33M117.6 0V5.500M117.6 27.500V33M144.7 0V5.500M144.7 27.500V33M171.7 0V5.500M171.7 27.500V33M198.7 0V5.500M198.7 27.500V33M225.7 0V5.500M225.7 27.500V33M252.8 0V5.500M252.8 27.500V33M279.8 0V5.500M279.8 27.500V33" stroke="#777" stroke-width="1"/></svg>
<div class="a" style="left:72px;top:640px;width:288px;height:6px;background:#fff;border:1px solid #c8c8c8;box-sizing:border-box;"></div>
<div class="a" style="left:73px;top:641px;width:140px;height:4px;background:#c2dcf0;"></div>
<div class="a" style="left:208px;top:632px;width:16px;height:22px;background:#fff;border:1px solid #b8b8b8;border-radius:3.500px;box-sizing:border-box;"></div>
<div class="a" style="left:381px;top:212px;width:260px;height:133px;background:#fff;border:1px solid #c0c0c0;box-sizing:border-box;"></div>
<div class="a" style="left:622px;top:213px;width:18px;height:131px;background:#eeeeee;"></div>
<div class="a" style="left:624px;top:247px;width:14.5px;height:41px;background:#c6c6c6;"></div>
<svg class="a" style="left:625px;top:230px;" width="13" height="9" viewBox="0 0 13 9"><path d="M1.200 7.800 6.500 2.200 11.800 7.800" fill="none" stroke="#555" stroke-width="2.300"/></svg>
<svg class="a" style="left:625px;top:318.5px;" width="13" height="9" viewBox="0 0 13 9"><path d="M1.200 1.200 6.500 6.800 11.800 1.200" fill="none" stroke="#555" stroke-width="2.300"/></svg>
<svg class="a" style="left:386px;top:219px;" width="13.5" height="13.5" viewBox="0 0 13.5 13.5"><rect x="0.500" y="0.500" width="12.500" height="12.500" fill="#fff" stroke="#9a9a9a"/><path d="M3.500 6.750H10" stroke="#777" stroke-width="1.200"/></svg>
<svg class="a" style="left:406px;top:218px;" width="13" height="17" viewBox="0 0 13 17"><path d="M0.600 1.600H11.400L10.500 4.500 9.500 15.400 7.500 16.400V3.500L8.500 1.600M7.500 3.500V16.400L0.600 14.500V1.600" fill="none" stroke="#8a8a8a" stroke-width="1.100"/></svg>
<span class="t" style="left:424.5px;top:219px;font-size:13px;color:#404040;transform:scaleX(0.979);">Node0</span>
<svg class="a" style="left:407px;top:244px;" width="13.5" height="13.5" viewBox="0 0 13.5 13.5"><rect x="0.500" y="0.500" width="12.500" height="12.500" fill="#fff" stroke="#9a9a9a"/><path d="M3.500 6.750H10" stroke="#777" stroke-width="1.200"/></svg>
<svg class="a" style="left:427px;top:243px;" width="13" height="17" viewBox="0 0 13 17"><path d="M0.600 1.600H11.400L10.500 4.500 9.500 15.400 7.500 16.400V3.500L8.500 1.600M7.500 3.500V16.400L0.600 14.500V1.600" fill="none" stroke="#8a8a8a" stroke-width="1.100"/></svg>
<span class="t" style="left:445.5px;top:244px;font-size:13px;color:#404040;transform:scaleX(0.979);">Node1</span>
<svg class="a" style="left:448px;top:268px;" width="13" height="16" viewBox="0 0 13 16"><path d="M0.600 0.600H8L12.400 5V15.400H0.600Z" fill="none" stroke="#777" stroke-width="1.100"/><path d="M8 0.600V5H12.400" fill="none" stroke="#777" stroke-width="1.100"/></svg>
<span class="t" style="left:466px;top:269px;font-size:13px;color:#404040;transform:scaleX(0.979);">Node2</span>
<svg class="a" style="left:386px;top:294px;" width="13.5" height="13.5" viewBox="0 0 13.5 13.5"><rect x="0.500" y="0.500" width="12.500" height="12.500" fill="#fff" stroke="#9a9a9a"/><path d="M3.500 6.750H10" stroke="#777" stroke-width="1.200"/></svg>
<svg class="a" style="left:406px;top:293px;" width="13" height="17" viewBox="0 0 13 17"><path d="M0.600 1.600H11.400L10.500 4.500 9.500 15.400 7.500 16.400V3.500L8.500 1.600M7.500 3.500V16.400L0.600 14.500V1.600" fill="none" stroke="#8a8a8a" stroke-width="1.100"/></svg>
<span class="t" style="left:424.5px;top:294px;font-size:13px;color:#404040;transform:scaleX(0.979);">Node3</span>
<svg class="a" style="left:427.5px;top:318px;" width="13" height="16" viewBox="0 0 13 16"><path d="M0.600 0.600H8L12.400 5V15.400H0.600Z" fill="none" stroke="#777" stroke-width="1.100"/><path d="M8 0.600V5H12.400" fill="none" stroke="#777" stroke-width="1.100"/></svg>
<span class="t" style="left:445.5px;top:319px;font-size:13px;color:#404040;transform:scaleX(0.979);">Node5</span>
<div class="a" style="left:407.5px;top:342.5px;width:8px;height:1.5px;background:#666;"></div>
<span class="t" style="left:381px;top:353px;font-size:13px;color:#404040;">Label with <span style="color:#8bc573">HTML</span></span>
<div class="a" style="left:381px;top:379px;width:260px;height:22px;background:#fff;border:1px solid #c8c8c8;box-sizing:border-box;"></div>
<div class="a" style="left:383px;top:381px;width:256px;height:18px;background:#fff;border:1px solid #c8c8c8;box-sizing:border-box;"></div>
<div class="a" style="left:384px;top:382px;width:102px;height:16px;background:#c2dcf0;"></div>
<span class="t" style="left:498px;top:383px;font-size:13px;color:#404040;transform:scaleX(0.980);">40%</span>
<div class="a" style="left:381px;top:419px;width:260px;height:234px;background:#fff;border:1px solid #c8c8c8;box-sizing:border-box;"></div>
<div class="a" style="left:382px;top:420px;width:258px;height:30px;background:#3096d1;"></div>
<span class="t" style="left:472px;top:428px;font-size:13px;color:#fff;">October 2016</span>
<svg class="a" style="left:390.5px;top:429.5px;" width="12" height="11" viewBox="0 0 12 11"><path d="M5.500 0.500 0.800 5.500 5.500 10.500M11 0.500 6.300 5.500 11 10.500" fill="none" stroke="#a4d2ee" stroke-width="1.300"/></svg>
<svg class="a" style="left:412.5px;top:429.5px;" width="7" height="11" viewBox="0 0 7 11"><path d="M6 0.500 1.300 5.500 6 10.500" fill="none" stroke="#a4d2ee" stroke-width="1.300"/></svg>
<svg class="a" style="left:601px;top:429.5px;" width="7" height="11" viewBox="0 0 7 11"><path d="M1 0.500 5.700 5.500 1 10.500" fill="none" stroke="#a4d2ee" stroke-width="1.300"/></svg>
<svg class="a" style="left:619px;top:429.5px;" width="12" height="11" viewBox="0 0 12 11"><path d="M1 0.500 5.700 5.500 1 10.500M6.500 0.500 11.200 5.500 6.500 10.500" fill="none" stroke="#a4d2ee" stroke-width="1.300"/></svg>
<div class="a" style="left:382px;top:450px;width:23px;height:175px;background:#e6e6e6;"></div>
<span class="t" style="left:414.035px;top:454px;font-size:13px;color:#3096d1;">Sun</span>
<span class="t" style="left:447.856px;top:454px;font-size:13px;color:#404040;">Mon</span>
<span class="t" style="left:484.541px;top:454px;font-size:13px;color:#404040;">Tue</span>
<span class="t" style="left:517.653px;top:454px;font-size:13px;color:#404040;">Wed</span>
<span class="t" style="left:554.601px;top:454px;font-size:13px;color:#404040;">Thu</span>
<span class="t" style="left:588.121px;top:454px;font-size:13px;color:#404040;">Fri</span>
<span class="t" style="left:615.244px;top:454px;font-size:13px;color:#3096d1;">Sat</span>
<div class="a" style="left:479px;top:550px;width:33px;height:25px;background:#2a86e2;border:1px solid #1f62b0;box-sizing:border-box;"></div>
<span class="t" style="left:386.271px;top:481px;font-size:13px;color:#404040;">38</span>
<span class="t" style="left:418.371px;top:480px;font-size:13px;color:#a8a8a8;">25</span>
<span class="t" style="left:453.271px;top:480px;font-size:13px;color:#a8a8a8;">26</span>
<span class="t" style="left:488.271px;top:480px;font-size:13px;color:#a8a8a8;">27</span>
<span class="t" style="left:523.671px;top:480px;font-size:13px;color:#a8a8a8;">28</span>
<span class="t" style="left:558.571px;top:480px;font-size:13px;color:#a8a8a8;">29</span>
<span class="t" style="left:588.471px;top:480px;font-size:13px;color:#a8a8a8;">30</span>
<span class="t" style="left:621.385px;top:480px;font-size:13px;color:#333;">1</span>
<span class="t" style="left:386.271px;top:506px;font-size:13px;color:#404040;">39</span>
<span class="t" style="left:421.985px;top:505px;font-size:13px;color:#333;">2</span>
<span class="t" style="left:456.885px;top:505px;font-size:13px;color:#333;">3</span>
<span class="t" style="left:491.885px;top:505px;font-size:13px;color:#333;">4</span>
<span class="t" style="left:527.285px;top:505px;font-size:13px;color:#333;">5</span>
<span class="t" style="left:562.185px;top:505px;font-size:13px;color:#333;">6</span>
<span class="t" style="left:592.085px;top:505px;font-size:13px;color:#333;">7</span>
<span class="t" style="left:621.385px;top:505px;font-size:13px;color:#333;">8</span>
<span class="t" style="left:386.271px;top:531px;font-size:13px;color:#404040;">40</span>
<span class="t" style="left:421.985px;top:530px;font-size:13px;color:#333;">9</span>
<span class="t" style="left:453.271px;top:530px;font-size:13px;color:#333;">10</span>
<span class="t" style="left:488.753px;top:530px;font-size:13px;color:#333;">11</span>
<span class="t" style="left:523.671px;top:530px;font-size:13px;color:#333;">12</span>
<span class="t" style="left:558.571px;top:530px;font-size:13px;color:#333;">13</span>
<span class="t" style="left:588.471px;top:530px;font-size:13px;color:#333;">14</span>
<span class="t" style="left:617.771px;top:530px;font-size:13px;color:#333;">15</span>
<span class="t" style="left:386.271px;top:556px;font-size:13px;color:#404040;">41</span>
<span class="t" style="left:418.371px;top:555px;font-size:13px;color:#333;">16</span>
<span class="t" style="left:453.271px;top:555px;font-size:13px;color:#333;">17</span>
<span class="t" style="left:488.271px;top:555px;font-size:13px;color:#fff;">18</span>
<span class="t" style="left:523.671px;top:555px;font-size:13px;color:#333;">19</span>
<span class="t" style="left:558.571px;top:555px;font-size:13px;color:#333;">20</span>
<span class="t" style="left:588.471px;top:555px;font-size:13px;color:#333;">21</span>
<span class="t" style="left:617.771px;top:555px;font-size:13px;color:#333;">22</span>
<span class="t" style="left:386.271px;top:581px;font-size:13px;color:#404040;">42</span>
<span class="t" style="left:418.371px;top:580px;font-size:13px;color:#333;">23</span>
<span class="t" style="left:453.271px;top:580px;font-size:13px;color:#333;">24</span>
<span class="t" style="left:488.271px;top:580px;font-size:13px;color:#333;">25</span>
<span class="t" style="left:523.671px;top:580px;font-size:13px;color:#333;">26</span>
<span class="t" style="left:558.571px;top:580px;font-size:13px;color:#333;">27</span>
<span class="t" style="left:588.471px;top:580px;font-size:13px;color:#333;">28</span>
<span class="t" style="left:617.771px;top:580px;font-size:13px;color:#333;">29</span>
<span class="t" style="left:386.271px;top:606px;font-size:13px;color:#404040;">43</span>
<span class="t" style="left:418.371px;top:605px;font-size:13px;color:#333;">30</span>
<span class="t" style="left:453.271px;top:605px;font-size:13px;color:#333;">31</span>
<span class="t" style="left:491.885px;top:605px;font-size:13px;color:#a8a8a8;">1</span>
<span class="t" style="left:527.285px;top:605px;font-size:13px;color:#a8a8a8;">2</span>
<span class="t" style="left:562.185px;top:605px;font-size:13px;color:#a8a8a8;">3</span>
<span class="t" style="left:592.085px;top:605px;font-size:13px;color:#a8a8a8;">4</span>
<span class="t" style="left:621.385px;top:605px;font-size:13px;color:#a8a8a8;">5</span>
<div class="a" style="left:382px;top:625px;width:258px;height:1px;background:#c8c8c8;"></div>
<div class="a" style="left:387px;top:631px;width:16px;height:16px;background:#fff;border:1px solid #4a7ab0;box-sizing:border-box;"></div>
<span class="t" style="left:407.5px;top:633px;font-size:13px;color:#404040;">10/18/2016</span>
<svg class="a" style="left:688px;top:233px;" width="84" height="84" viewBox="0 0 21 21"><path d="M0 0h7v1h-7zM10 0h1v1h-1zM14 0h7v1h-7zM0 1h1v1h-1zM6 1h1v1h-1zM8 1h1v1h-1zM11 1h2v1h-2zM14 1h1v1h-1zM20 1h1v1h-1zM0 2h1v1h-1zM2 2h3v1h-3zM6 2h1v1h-1zM9 2h1v1h-1zM11 2h1v1h-1zM14 2h1v1h-1zM16 2h3v1h-3zM20 2h1v1h-1zM0 3h1v1h-1zM2 3h3v1h-3zM6 3h1v1h-1zM8 3h2v1h-2zM11 3h1v1h-1zM14 3h1v1h-1zM16 3h3v1h-3zM20 3h1v1h-1zM0 4h1v1h-1zM2 4h3v1h-3zM6 4h1v1h-1zM10 4h1v1h-1zM14 4h1v1h-1zM16 4h3v1h-3zM20 4h1v1h-1zM0 5h1v1h-1zM6 5h1v1h-1zM8 5h5v1h-5zM14 5h1v1h-1zM20 5h1v1h-1zM0 6h7v1h-7zM8 6h1v1h-1zM10 6h1v1h-1zM12 6h1v1h-1zM14 6h7v1h-7zM10 7h2v1h-2zM0 8h5v1h-5zM6 8h4v1h-4zM12 8h2v1h-2zM15 8h1v1h-1zM17 8h1v1h-1zM19 8h1v1h-1zM2 9h4v1h-4zM7 9h3v1h-3zM13 9h1v1h-1zM16 9h5v1h-5zM1 10h2v1h-2zM5 10h2v1h-2zM8 10h1v1h-1zM11 10h4v1h-4zM18 10h2v1h-2zM0 11h3v1h-3zM5 11h1v1h-1zM7 11h1v1h-1zM13 11h1v1h-1zM16 11h3v1h-3zM0 12h1v1h-1zM3 12h2v1h-2zM6 12h1v1h-1zM8 12h2v1h-2zM11 12h1v1h-1zM14 12h1v1h-1zM16 12h2v1h-2zM20 12h1v1h-1zM8 13h1v1h-1zM14 13h5v1h-5zM20 13h1v1h-1zM0 14h7v1h-7zM8 14h1v1h-1zM10 14h1v1h-1zM12 14h2v1h-2zM15 14h1v1h-1zM18 14h2v1h-2zM0 15h1v1h-1zM6 15h1v1h-1zM10 15h1v1h-1zM13 15h1v1h-1zM16 15h3v1h-3zM0 16h1v1h-1zM2 16h3v1h-3zM6 16h1v1h-1zM8 16h1v1h-1zM13 16h2v1h-2zM16 16h2v1h-2zM0 17h1v1h-1zM2 17h3v1h-3zM6 17h1v1h-1zM8 17h2v1h-2zM15 17h2v1h-2zM18 17h2v1h-2zM0 18h1v1h-1zM2 18h3v1h-3zM6 18h1v1h-1zM8 18h2v1h-2zM11 18h5v1h-5zM18 18h1v1h-1zM0 19h1v1h-1zM6 19h1v1h-1zM8 19h2v1h-2zM11 19h3v1h-3zM15 19h2v1h-2zM18 19h1v1h-1zM0 20h7v1h-7zM8 20h1v1h-1zM10 20h3v1h-3zM14 20h4v1h-4zM19 20h1v1h-1z" fill="#5a5a5a" shape-rendering="crispEdges"/></svg>
<svg class="a" style="left:647px;top:379px;" width="166" height="110" viewBox="0 0 166 110"><rect x="0.500" y="0.500" width="165" height="109" fill="none" stroke="#2a2a2a" stroke-width="1" stroke-dasharray="3 2" shape-rendering="crispEdges"/></svg>
<svg class="a" style="left:0;top:0" width="1140" height="760" viewBox="0 0 1140 760"><circle cx="729.8" cy="434.2" r="48" fill="none" stroke="#337ab7" stroke-width="1"/><circle cx="729.8" cy="434.2" r="33" fill="none" stroke="#337ab7" stroke-width="1"/><path d="M777.8 434.2A48 48 0 1 1 684.15 419.37L698.42 424.00A33 33 0 1 0 762.8 434.2Z" fill="#337ab7"/></svg>
<span class="t" style="left:717px;top:427px;font-size:13px;color:#337ab7;transform:scaleX(0.980);">55%</span>
<svg class="a" style="left:0;top:0" width="1140" height="760" viewBox="0 0 1140 760"><path d="M669.4 628.7A61 61 0 0 1 791.4 628.7H768.4A38 38 0 0 0 692.4 628.7Z" fill="#e9e7e9"/><path d="M669.4 628.7A61 61 0 0 1 720.86 568.45L724.46 591.17A38 38 0 0 0 692.4 628.7Z" fill="#f0ce0c"/></svg>
<span class="t" style="left:701.5px;top:540px;font-size:12px;color:#444;font-weight:700;transform:scaleX(0.983);">justGage1</span>
<span class="t" style="left:720.5px;top:613px;font-size:17.5px;color:#000;font-weight:700;">45</span>
<span class="t" style="left:678px;top:633px;font-size:9.5px;color:#b3b3b3;">0</span>
<span class="t" style="left:772.3px;top:633px;font-size:9.5px;color:#b3b3b3;">100</span>
<div class="a" style="left:58px;top:665px;width:803px;height:1px;background:#c4c4c4;"></div>
<svg class="a" style="left:71px;top:674px;" width="14" height="14" viewBox="0 0 14 14"><rect x="0.500" y="0.500" width="13" height="13" fill="#fff" stroke="#9a9a9a"/><path d="M3 7.3 5.8 10.5 11.3 3.300" fill="none" stroke="#8a8a8a" stroke-width="1.200"/></svg>
<span class="t" style="left:92.5px;top:674px;font-size:13px;color:#404040;">Status Bar Panel</span>
<svg class="a" style="left:847.5px;top:681.5px;" width="11" height="11" viewBox="0 0 11 11"><path d="M10.500 0.500 0.500 10.500M10.500 4 4 10.500M10.500 7.500 7.500 10.500" stroke="#8a8a8a" stroke-width="0.900"/></svg>
<div class="a" style="left:31px;top:700px;width:873px;height:1px;background:#c8c8c8;"></div>
<div class="a" style="left:31px;top:701px;width:872px;height:30px;background:#2d2d30;border:1px solid #3f3f46;border-top:none;box-sizing:border-box;"></div>
<div class="a" style="left:40px;top:708px;width:15px;height:15px;border:2px solid #ffffff;box-sizing:border-box;background:linear-gradient(175deg,#e81818 25%,#f46a20 65%,#fca030);"></div>
<span class="t" style="left:59px;top:710px;font-size:12px;color:#f1f1f1;transform:scaleX(0.865);">Blue-2</span>
<svg class="a" style="left:98.5px;top:715px;" width="6" height="3.5" viewBox="0 0 6 3.5"><path d="M0 0H6L3 3.500Z" fill="#0a0a0a"/></svg>
<div class="a" style="left:121px;top:706px;width:1px;height:20px;background:#222224;"></div>
<div class="a" style="left:129px;top:705px;width:23px;height:22px;background:#2d2d30;border:1px solid #3399ff;box-sizing:border-box;"></div>
<svg class="a" style="left:132px;top:708px;" width="17" height="16" viewBox="0 0 17 16"><path d="M0.500 0.500H16.500V15.500H0.500ZM6 0V16M11.500 0V16M0 5.500H17M0 10.500H17" stroke="#55555a" fill="#333" stroke-width="1"/></svg>
<span class="t" style="left:169.5px;top:710px;font-size:12px;color:#f1f1f1;transform:scaleX(0.884);">25px</span>
<svg class="a" style="left:205.5px;top:715px;" width="6" height="3.5" viewBox="0 0 6 3.5"><path d="M0 0H6L3 3.500Z" fill="#0a0a0a"/></svg>
<div class="a" style="left:225px;top:706px;width:1px;height:20px;background:#222224;"></div>
<svg class="a" style="left:236px;top:710px;" width="17" height="12" viewBox="0 0 17 12"><path d="M0.500 2H3V0.500H6V2H16.500V11.500H0.500Z" fill="#0b62a8"/><circle cx="10.500" cy="6.800" r="3" fill="#2d2d30"/><circle cx="10.500" cy="6.800" r="1.600" fill="#0b62a8"/><rect x="13.500" y="4.500" width="2" height="4.500" fill="#2d2d30"/></svg>
<div class="a" style="left:264px;top:706px;width:1px;height:20px;background:#222224;"></div>
<div class="a" style="left:272px;top:705px;width:23px;height:22px;background:#2d2d30;border:1px solid #3399ff;box-sizing:border-box;"></div>
<svg class="a" style="left:275px;top:711px;" width="17" height="10" viewBox="0 0 17 10"><path d="M0.500 5Q8.500 -3.500 16.500 5Q8.500 13.500 0.500 5Z" fill="#0b62a8"/><circle cx="8.500" cy="5" r="3" fill="#2d2d30"/><circle cx="8.500" cy="5" r="1.500" fill="#0b62a8"/></svg>
<svg class="a" style="left:298px;top:709px;" width="16" height="14" viewBox="0 0 16 14"><path d="M2 6A6 6 0 0 1 13 4" fill="none" stroke="#0b62a8" stroke-width="2.400"/><path d="M14 8A6 6 0 0 1 3 10" fill="none" stroke="#0b62a8" stroke-width="2.400"/><path d="M10.500 5.500H15.500V0.500Z" fill="#0b62a8"/><path d="M5.500 8.500H0.500V13.500Z" fill="#0b62a8"/></svg>
<div class="a" style="left:326px;top:706px;width:1px;height:20px;background:#222224;"></div>
<svg class="a" style="left:336px;top:709px;" width="17" height="14" viewBox="0 0 17 14"><path d="M5.500 3V1.500Q5.500 0.500 6.500 0.500H10.500Q11.500 0.500 11.500 1.500V3" fill="none" stroke="#0b62a8" stroke-width="1.400"/><path d="M0.500 3.500H16.500V7H0.500ZM0.500 8.200H16.500V13.500H0.500Z" fill="#0b62a8"/><rect x="7" y="6.300" width="3" height="3" fill="#2d2d30"/></svg>
<svg class="a" style="left:360px;top:708px;" width="16" height="16" viewBox="0 0 16 16"><path d="M1.500 14.500 8.500 7.500" stroke="#0b62a8" stroke-width="3.200" stroke-linecap="round"/><path d="M15.300 3.500 12.500 6 10.200 5.500 9.800 3.300 12.500 0.700Q9.500 0 8 2Q6.800 3.800 7.500 6L9.800 8.300Q12.500 9 14.200 7.500Q15.800 5.800 15.300 3.500Z" fill="#0b62a8"/></svg>
<span class="t" style="left:382px;top:710px;font-size:12px;color:#f1f1f1;transform:scaleX(0.912);">coolClock1</span>
<div class="a" style="left:442px;top:710px;width:10px;height:10px;border:1px dotted #444448;box-sizing:border-box;"></div>
<span class="t" style="left:458.5px;top:710px;font-size:12px;color:#f1f1f1;transform:scaleX(0.905);">(173, 168) (117 x 111)</span>
<svg class="a" style="left:877px;top:708px;" width="15" height="16.5" viewBox="0 0 17 19"><path d="M8.500 0.800 15.800 5V14L8.500 18.200 1.200 14V5Z" fill="#2d2d30" stroke="#f1f1f1" stroke-width="1.500"/><path d="M3 6.200 6.200 4.300V8.300L8.500 6.700 10.800 8.300V4.300L14 6.200V11.800L8.500 8.600 3 11.800Z" fill="#f1f1f1"/><path d="M8.500 10 13.200 12.700 8.500 15.800 3.800 12.700Z" fill="#4c4c4c"/></svg>
<div class="a" style="left:0px;top:737px;width:1140px;height:23px;background:#007acc;"></div><span class="t" style="left:4px;top:744px;font-size:12px;color:#ffffff;transform:scaleX(0.951);">Ready</span>
<div class="a" style="left:911px;top:85px;width:223px;height:296px;background:#2d2d30;border:1px solid #3f3f46;box-sizing:border-box;"></div>
<span class="t" style="left:915.5px;top:90px;font-size:12px;color:#f1f1f1;">Document Outline - Window1</span>
<svg class="a" style="left:1085px;top:94.3px;" width="8" height="4" viewBox="0 0 8 4"><path d="M0 0H8L4.0 4Z" fill="#f1f1f1"/></svg>
<svg class="a" style="left:1101px;top:91px;" width="9" height="11" viewBox="0 0 9 11"><path d="M2.500 6V0.500H6.500V6" stroke="#f1f1f1" stroke-width="1" fill="none"/><rect x="5" y="0.500" width="1.800" height="5.500" fill="#f1f1f1"/><path d="M0.500 6.500H8.500" stroke="#f1f1f1" stroke-width="1.200"/><path d="M4.500 7V11" stroke="#f1f1f1" stroke-width="1.200"/></svg>
<svg class="a" style="left:1117px;top:91.5px;" width="10" height="9" viewBox="0 0 10 9"><path d="M0.700 0.500 9.300 8.500M9.300 0.500 0.700 8.500" stroke="#f1f1f1" stroke-width="1.700"/></svg>
<svg class="a" style="left:916px;top:111px;" width="24" height="16" viewBox="0 0 24 16"><rect x="4.600" y="0.600" width="9" height="11" fill="#2d2d30" stroke="#d8d8d8" stroke-width="1.200"/><rect x="0.600" y="4.200" width="9" height="11" fill="#2d2d30" stroke="#d8d8d8" stroke-width="1.200"/><rect x="3" y="6.800" width="4.200" height="6" fill="#9a9a9e"/><path d="M17.500 7H22L19.700 9.500Z" fill="#0a0a0a"/></svg>
<div class="a" style="left:945px;top:109px;width:1px;height:19px;background:#222224;"></div>
<svg class="a" style="left:950px;top:110px;" width="18" height="18" viewBox="0 0 18 18"><path d="M6.500 1.500H11.500V6.500H16.500V11.500H11.500V16.500H6.500V11.500H1.500V6.500H6.500Z" fill="#3c9c3c" stroke="#2f7d2f" stroke-width="1.200"/></svg>
<svg class="a" style="left:975px;top:110px;" width="16" height="17" viewBox="0 0 16 17"><path d="M4.500 3V0.600H15.400V11.500H13" fill="none" stroke="#d8d8d8" stroke-width="1.200"/><path d="M2.500 5V2.600H13.400V13.500H11" fill="none" stroke="#d8d8d8" stroke-width="1.200"/><rect x="0.600" y="5.600" width="10.800" height="10.800" fill="#2d2d30" stroke="#d8d8d8" stroke-width="1.200"/><rect x="3.500" y="10" width="5" height="2" fill="#3b9aec"/></svg>
<div class="a" style="left:997px;top:109px;width:1px;height:19px;background:#222224;"></div>
<svg class="a" style="left:1005.3px;top:112px;" width="11" height="14.5" viewBox="0 0 11 14.5"><path d="M3 0.700H8V6L10.300 5V8.200L5.500 13.700 0.700 8.200V5L3 6Z" fill="#2d2d30" stroke="#f1f1f1" stroke-width="1.400" stroke-linejoin="round"/><path d="M5.500 2.500V9.500" stroke="#f1f1f1" stroke-width="1.300"/></svg>
<svg class="a" style="left:1028.7px;top:112px;" width="11" height="14.5" viewBox="0 0 11 14.5"><g transform="translate(0,14.400) scale(1,-1)"><path d="M3 0.700H8V6L10.300 5V8.200L5.500 13.700 0.700 8.200V5L3 6Z" fill="#2d2d30" stroke="#f1f1f1" stroke-width="1.400" stroke-linejoin="round"/><path d="M5.500 2.500V9.500" stroke="#f1f1f1" stroke-width="1.300"/></g></svg>
<svg class="a" style="left:1050px;top:114.5px;" width="15" height="10" viewBox="0 0 15 10"><path d="M0.300 4.700 6.800 0V3H14.500V6.500H6.800V9.400Z" fill="#707074"/><path d="M3.500 4.700H12" stroke="#505054" stroke-width="1"/></svg>
<svg class="a" style="left:1073px;top:114.5px;" width="15" height="10" viewBox="0 0 15 10"><g transform="translate(14.800,0) scale(-1,1)"><path d="M0.300 4.700 6.800 0V3H14.500V6.500H6.800V9.400Z" fill="#707074"/><path d="M3.500 4.700H12" stroke="#505054" stroke-width="1"/></g></svg>
<div class="a" style="left:911px;top:131px;width:205px;height:232px;background:#252526;overflow:hidden"><svg class="a" style="left:23px;top:3px;" width="14" height="14" viewBox="0 0 15 15"><rect x="0.600" y="0.600" width="13.800" height="13.800" stroke="#f1f1f1" fill="none" stroke-width="1.400" fill="#000"/><rect x="0.600" y="0.600" width="13.800" height="2.800" fill="#f1f1f1"/><path d="M3 6.500H7M3 9.500H7M9 6.500H12M9 9H12V12H9Z" stroke="#f1f1f1" fill="none" stroke-width="1.400" stroke-width="1"/></svg><span class="t" style="left:43.5px;top:4px;font-size:12px;color:#f1f1f1;font-weight:700;transform:scaleX(0.975);">Window1  Form</span><svg class="a" style="left:42px;top:21px;" width="14" height="14" viewBox="0 0 15 15"><circle cx="7.500" cy="7.500" r="6.400" stroke="#f1f1f1" fill="none" stroke-width="1.400" fill="#000"/><text x="7.500" y="10" font-size="6.500" font-weight="700" text-anchor="middle" fill="#f1f1f1" font-family="Liberation Sans,sans-serif">50</text></svg><span class="t" style="left:62px;top:22px;font-size:12px;color:#f1f1f1;font-weight:700;transform:scaleX(0.940);">progressCircle1  ProgressCircle</span><svg class="a" style="left:42px;top:39px;" width="14" height="14" viewBox="0 0 15 15"><path d="M2.500 12.500A6.200 6.200 0 1 1 12.500 12.500" stroke="#f1f1f1" fill="none" stroke-width="1.400" stroke-width="1.400"/><path d="M7 10 10 6.500" stroke="#f1f1f1" fill="none" stroke-width="1.400" stroke-width="1.400"/></svg><span class="t" style="left:62px;top:40px;font-size:12px;color:#f1f1f1;font-weight:700;transform:scaleX(0.947);">justGage1  JustGage</span><svg class="a" style="left:42px;top:57px;" width="14" height="14" viewBox="0 0 15 15"><path d="M1.500 2.500H6.500V9.500L4 12.500 1.500 9.500Z" stroke="#f1f1f1" fill="none" stroke-width="1.400" fill="#000"/><path d="M6.500 6.500H14.500" stroke="#f1f1f1" fill="none" stroke-width="1.400" stroke-width="1.600"/></svg><span class="t" style="left:62px;top:58px;font-size:12px;color:#f1f1f1;font-weight:700;transform:scaleX(0.974);">trackBar1  TrackBar</span><svg class="a" style="left:42px;top:75px;" width="14" height="14" viewBox="0 0 15 15"><rect x="0.600" y="1.600" width="13.800" height="12.800" stroke="#f1f1f1" fill="none" stroke-width="1.400" fill="#000"/><rect x="0.600" y="1.600" width="13.800" height="3.800" fill="#f1f1f1"/><path d="M3 3.500H4.500M10.500 3.500H12" stroke="#000" stroke-width="1.400"/><path d="M3 7.500H12M3 9.700H12M3 12H12" stroke="#f1f1f1" stroke-width="1.200" stroke-dasharray="1.500 0.800"/></svg><span class="t" style="left:62px;top:76px;font-size:12px;color:#f1f1f1;font-weight:700;">dateTimePicker1  DateTimePicker</span><svg class="a" style="left:42px;top:93px;" width="14" height="14" viewBox="0 0 15 15"><rect x="0.600" y="0.600" width="13.800" height="13.800" stroke="#f1f1f1" fill="none" stroke-width="1.400" fill="#000"/><path d="M8.500 0.500V14.500M8.500 7.500H14.500" stroke="#f1f1f1" fill="none" stroke-width="1.400" stroke-width="1"/><path d="M10 5.500 11.500 3 13 5.500ZM10 9.500 11.500 12 13 9.500Z" fill="#f1f1f1"/><path d="M3.500 3 4.500 2.500V6M3.500 9H5.500V10.500H3.500V12H5.500" stroke="#f1f1f1" fill="none" stroke-width="1.400" stroke-width="1"/></svg><span class="t" style="left:62px;top:94px;font-size:12px;color:#f1f1f1;font-weight:700;">numericUpDown1  NumericUpDown</span><svg class="a" style="left:42px;top:111px;" width="14" height="14" viewBox="0 0 15 15"><rect x="0.600" y="0.600" width="13.800" height="4" stroke="#f1f1f1" fill="none" stroke-width="1.400"/><path d="M10.500 1.800H13L11.700 3.500Z" fill="#f1f1f1"/><rect x="2.600" y="5.600" width="11.800" height="8.800" stroke="#f1f1f1" fill="none" stroke-width="1.400" fill="#000"/><path d="M4.500 8.500H11M4.500 11.500H9" stroke="#f1f1f1" fill="none" stroke-width="1.400"/></svg><span class="t" style="left:62px;top:112px;font-size:12px;color:#f1f1f1;font-weight:700;transform:scaleX(0.962);">comboBox1  ComboBox</span><svg class="a" style="left:42px;top:129px;" width="14" height="14" viewBox="0 0 15 15"><rect x="0.600" y="1.600" width="13.800" height="11.800" stroke="#f1f1f1" fill="none" stroke-width="1.400" fill="#000"/><text x="7.500" y="10.200" font-size="7" font-weight="700" text-anchor="middle" fill="#f1f1f1" font-family="Liberation Sans,sans-serif">abl</text></svg><span class="t" style="left:62px;top:130px;font-size:12px;color:#f1f1f1;font-weight:700;transform:scaleX(1.031);">textBox1  TextBox</span><svg class="a" style="left:42px;top:147px;" width="14" height="14" viewBox="0 0 15 15"><rect x="0.600" y="1.600" width="13.800" height="12.800" stroke="#f1f1f1" fill="none" stroke-width="1.400" fill="#000"/><rect x="0.600" y="1.600" width="13.800" height="3.800" fill="#f1f1f1"/><path d="M3 3.500H4.500M10.500 3.500H12" stroke="#000" stroke-width="1.400"/><path d="M3 7.500H12M3 9.700H12M3 12H12" stroke="#f1f1f1" stroke-width="1.200" stroke-dasharray="1.500 0.800"/></svg><span class="t" style="left:62px;top:148px;font-size:12px;color:#f1f1f1;font-weight:700;transform:scaleX(0.975);">monthCalendar1  MonthCalendar</span><svg class="a" style="left:42px;top:165px;" width="14" height="14" viewBox="0 0 15 15"><path d="M1 2.500V12.500M3.500 2.500V12.500M6.500 2.500V12.500M9 2.500V12.500M11.500 2.500V12.500M14 2.500V12.500" stroke="#f1f1f1" stroke-width="1.500"/><path d="M5 2.500V12.500M12.700 2.500V12.500" stroke="#f1f1f1" stroke-width="0.700"/></svg><span class="t" style="left:62px;top:166px;font-size:12px;color:#f1f1f1;font-weight:700;transform:scaleX(0.963);">barcode1  Barcode</span><div class="a" style="left:0px;top:181px;width:205px;height:18px;background:#3f3f46;"></div><svg class="a" style="left:42px;top:183px;" width="14" height="14" viewBox="0 0 15 15"><circle cx="7.500" cy="7.500" r="6.700" fill="#f1f1f1"/><circle cx="7.500" cy="7.500" r="5.200" fill="#000"/><path d="M7.500 3.500V7.700L10.200 10" stroke="#f1f1f1" fill="none" stroke-width="1.400" stroke-width="1.500"/></svg><span class="t" style="left:62px;top:184px;font-size:12px;color:#f1f1f1;font-weight:700;transform:scaleX(0.923);">coolClock1  CoolClock</span><svg class="a" style="left:42px;top:201px;" width="14" height="14" viewBox="0 0 15 15"><path d="M1.500 0.500V10" stroke="#f1f1f1" fill="none" stroke-width="1.400" stroke-width="1.500"/><rect x="0.600" y="9.600" width="13.800" height="4.300" stroke="#f1f1f1" fill="none" stroke-width="1.400" fill="#000"/><path d="M8.500 7.500H13.500" stroke="#f1f1f1" fill="none" stroke-width="1.400" stroke-width="1.500"/></svg><span class="t" style="left:62px;top:202px;font-size:12px;color:#f1f1f1;font-weight:700;transform:scaleX(0.949);">statusBar1  StatusBar</span><svg class="a" style="left:61px;top:219px;" width="14" height="14" viewBox="0 0 15 15"><rect x="5" y="1.600" width="9.400" height="8.500" stroke="#f1f1f1" fill="none" stroke-width="1.400" fill="#000" stroke-width="1.400"/><circle cx="4.300" cy="7" r="2.200" fill="#f1f1f1"/><path d="M0.500 14.500V12Q0.500 10 2.500 10H6Q8 10 8 12V14.500Z" fill="#f1f1f1"/></svg><span class="t" style="left:81px;top:220px;font-size:12px;color:#f1f1f1;font-weight:700;transform:scaleX(0.943);">statusBarPanel1  StatusBarPanel</span><svg class="a" style="left:11px;top:7.5px;" width="6.5" height="6" viewBox="0 0 6.5 6"><path d="M6.500 0V6H0Z" fill="#f1f1f1"/></svg><svg class="a" style="left:30px;top:205.5px;" width="6.5" height="6" viewBox="0 0 6.5 6"><path d="M6.500 0V6H0Z" fill="#f1f1f1"/></svg></div>
<div class="a" style="left:1116px;top:131px;width:17px;height:249px;background:#3e3e42;"></div>
<svg class="a" style="left:1120px;top:138px;" width="9" height="5" viewBox="0 0 9 5"><path d="M0 5H9L4.500 0Z" fill="#999"/></svg>
<svg class="a" style="left:1120px;top:352px;" width="9" height="5" viewBox="0 0 9 5"><path d="M0 0H9L4.500 5Z" fill="#999"/></svg>
<div class="a" style="left:1120.5px;top:146px;width:8.5px;height:97px;background:#686868;"></div>
<div class="a" style="left:912px;top:363px;width:204px;height:17px;background:#3e3e42;"></div>
<svg class="a" style="left:917px;top:367px;" width="5" height="9" viewBox="0 0 5 9"><path d="M5 0V9L0 4.500Z" fill="#999"/></svg>
<svg class="a" style="left:1105px;top:367px;" width="5" height="9" viewBox="0 0 5 9"><path d="M0 0V9L5 4.500Z" fill="#999"/></svg>
<div class="a" style="left:928px;top:367.5px;width:130px;height:8.5px;background:#686868;"></div>
<div class="a" style="left:1000.5px;top:380px;width:43.5px;height:20px;background:#252526;"></div>
<span class="t" style="left:915px;top:385px;font-size:12px;color:#d0d0d0;transform:scaleX(0.911);">Solu...</span>
<span class="t" style="left:960px;top:385px;font-size:12px;color:#d0d0d0;transform:scaleX(0.920);">Tea...</span>
<span class="t" style="left:1006.5px;top:385px;font-size:12px;color:#0097fb;transform:scaleX(0.925);">Doc...</span>
<span class="t" style="left:1049.5px;top:385px;font-size:12px;color:#d0d0d0;transform:scaleX(0.882);">Clas...</span>
<span class="t" style="left:1094px;top:385px;font-size:12px;color:#d0d0d0;transform:scaleX(0.868);">Reso...</span>
<div class="a" style="left:910px;top:401px;width:230px;height:7px;background:#3f3f46;"></div>
<div class="a" style="left:911px;top:407px;width:223px;height:324px;background:#2d2d30;border:1px solid #3f3f46;box-sizing:border-box;"></div>
<span class="t" style="left:915.5px;top:413px;font-size:12px;color:#f1f1f1;transform:scaleX(0.951);">Properties</span>
<div class="a grip2" style="left:975px;top:416px;width:103px;height:5px"></div>
<svg class="a" style="left:1085px;top:416.3px;" width="8" height="4" viewBox="0 0 8 4"><path d="M0 0H8L4.0 4Z" fill="#f1f1f1"/></svg>
<svg class="a" style="left:1101px;top:413px;" width="9" height="11" viewBox="0 0 9 11"><path d="M2.500 6V0.500H6.500V6" stroke="#f1f1f1" stroke-width="1" fill="none"/><rect x="5" y="0.500" width="1.800" height="5.500" fill="#f1f1f1"/><path d="M0.500 6.500H8.500" stroke="#f1f1f1" stroke-width="1.200"/><path d="M4.500 7V11" stroke="#f1f1f1" stroke-width="1.200"/></svg>
<svg class="a" style="left:1117px;top:413.5px;" width="10" height="9" viewBox="0 0 10 9"><path d="M0.700 0.500 9.300 8.500M9.300 0.500 0.700 8.500" stroke="#f1f1f1" stroke-width="1.700"/></svg>
<div class="a" style="left:912px;top:430px;width:221px;height:23px;background:#333337;"></div>
<span class="t" style="left:917px;top:435px;font-size:12px;color:#f1f1f1;font-weight:700;transform:scaleX(0.922);">coolClock1</span>
<div class="a" style="left:983px;top:432px;width:135px;height:18px;overflow:hidden"><span class="t" style="left:0px;top:3px;font-size:12px;color:#f1f1f1;transform:scaleX(0.957);">Wisej.Web.Ext.CoolClock.CoolClock</span></div>
<svg class="a" style="left:1124px;top:440px;" width="6" height="3.5" viewBox="0 0 6 3.5"><path d="M0 0H6L3.0 3.5Z" fill="#f1f1f1"/></svg>
<svg class="a" style="left:917px;top:459px;" width="16" height="15" viewBox="0 0 16 15"><path d="M0.500 0.500H5.500V5.500H0.500ZM0.500 9H5.500V14H0.500Z" fill="none" stroke="#d0d0d0"/><path d="M3 1.500V4.500M1.500 3H4.500M3 10V13M1.500 11.500H4.500" stroke="#d0d0d0"/><path d="M8 1.500H15M8 4H13M8 6.500H15M8 10H13M8 12.500H15" stroke="#d0d0d0" stroke-dasharray="1.500 0.700"/></svg>
<div class="a" style="left:937px;top:455px;width:23px;height:22px;background:#1e1e1e;border:1px solid #3399ff;box-sizing:border-box;"></div>
<div class="a" style="left:966px;top:455px;width:23px;height:22px;background:#1e1e1e;border:1px solid #3399ff;box-sizing:border-box;"></div>
<svg class="a" style="left:941px;top:459px;" width="16" height="15" viewBox="0 0 16 15"><text x="0" y="6.500" font-size="7.500" font-weight="700" fill="#d0d0d0" font-family="Liberation Sans,sans-serif">A</text><text x="0" y="14.500" font-size="7.500" font-weight="700" fill="#d0d0d0" font-family="Liberation Sans,sans-serif">Z</text><path d="M11 0.500V11" stroke="#3bb0f0" stroke-width="2"/><path d="M7.500 8 11 13 14.500 8Z" fill="#3bb0f0"/></svg>
<svg class="a" style="left:970px;top:459px;" width="16" height="15" viewBox="0 0 16 15"><path d="M6 1.500H11.500L14.500 4.500V13.500H6.500" fill="none" stroke="#d0d0d0" stroke-width="1.200"/><path d="M3.500 14.500V7.500" stroke="#d0d0d0" stroke-width="1.800"/><path d="M1.500 1.500V5Q1.500 7 3.500 7Q5.500 7 5.500 5V1.500" fill="none" stroke="#d0d0d0" stroke-width="1.500"/></svg>
<svg class="a" style="left:995px;top:459px;" width="11" height="15" viewBox="0 0 11 15"><path d="M5 0.500H10L6.500 5.500H10.500L2 14.500 4.500 8H0.500Z" fill="#d0d0d0"/></svg>
<div class="a" style="left:1015px;top:456px;width:1px;height:20px;background:#222224;"></div>
<svg class="a" style="left:1021px;top:459px;" width="15" height="15" viewBox="0 0 15 15"><circle cx="10" cy="5" r="4.200" fill="#6a6a6e"/><circle cx="11.200" cy="3.800" r="1.300" fill="#2d2d30"/><path d="M7.500 7 1 13.500V14.500H4V12.500H6V10.500L8.500 8.500Z" fill="#6a6a6e"/></svg>
<div class="a" style="left:912px;top:481px;width:14px;height:186px;background:#2d2d30;"></div>
<div class="a" style="left:926px;top:481px;width:189px;height:186px;background:#252526;"></div>
<div class="a" style="left:926px;top:481px;width:189px;height:186px;overflow:hidden"><div class="a" style="left:0px;top:18.5px;width:189px;height:1px;background:#2d2d30;"></div><div class="a" style="left:0;top:0px;width:89.5px;height:18px;overflow:hidden"><span class="t" style="left:3.5px;top:3px;font-size:12px;color:#f1f1f1;transform:scaleX(0.988);">RightToLeft</span></div><span class="t" style="left:93.5px;top:3px;font-size:12px;color:#f1f1f1;transform:scaleX(1.017);">No</span><div class="a" style="left:0px;top:37.5px;width:189px;height:1px;background:#2d2d30;"></div><div class="a" style="left:0;top:19px;width:89.5px;height:18px;overflow:hidden"><span class="t" style="left:3.5px;top:3px;font-size:12px;color:#f1f1f1;transform:scaleX(0.979);">ShowDigital</span></div><span class="t" style="left:93.5px;top:22px;font-size:12px;color:#f1f1f1;transform:scaleX(0.876);">False</span><div class="a" style="left:0px;top:56.5px;width:189px;height:1px;background:#2d2d30;"></div><div class="a" style="left:0;top:38px;width:89.5px;height:18px;overflow:hidden"><span class="t" style="left:3.5px;top:3px;font-size:12px;color:#f1f1f1;transform:scaleX(0.985);">ShowSecondHand</span></div><span class="t" style="left:93.5px;top:41px;font-size:12px;color:#f1f1f1;transform:scaleX(0.929);">True</span><div class="a" style="left:0px;top:75.5px;width:189px;height:1px;background:#2d2d30;"></div><div class="a" style="left:0;top:57px;width:89.5px;height:18px;overflow:hidden"><span class="t" style="left:3.5px;top:3px;font-size:12px;color:#f1f1f1;transform:scaleX(0.840);">Size</span></div><span class="t" style="left:93.5px;top:60px;font-size:12px;color:#f1f1f1;font-weight:700;transform:scaleX(1.044);">117, 111</span><div class="a" style="left:0px;top:94.5px;width:189px;height:1px;background:#2d2d30;"></div><div class="a" style="left:0;top:76px;width:89.5px;height:18px;overflow:hidden"><span class="t" style="left:3.5px;top:3px;font-size:12px;color:#f1f1f1;transform:scaleX(0.908);">Skin</span></div><span class="t" style="left:93.5px;top:79px;font-size:12px;color:#f1f1f1;font-weight:700;transform:scaleX(0.896);">Disc</span><div class="a" style="left:0px;top:113.5px;width:189px;height:1px;background:#2d2d30;"></div><div class="a" style="left:0;top:95px;width:89.5px;height:18px;overflow:hidden"><span class="t" style="left:3.5px;top:3px;font-size:12px;color:#f1f1f1;transform:scaleX(0.955);">TabIndex</span></div><span class="t" style="left:93.5px;top:98px;font-size:12px;color:#f1f1f1;font-weight:700;transform:scaleX(0.989);">13</span><div class="a" style="left:0px;top:132.5px;width:189px;height:1px;background:#2d2d30;"></div><div class="a" style="left:0;top:114px;width:89.5px;height:18px;overflow:hidden"><span class="t" style="left:3.5px;top:3px;font-size:12px;color:#f1f1f1;transform:scaleX(0.954);">TabStop</span></div><span class="t" style="left:93.5px;top:117px;font-size:12px;color:#f1f1f1;transform:scaleX(0.929);">True</span><div class="a" style="left:0px;top:151.5px;width:189px;height:1px;background:#2d2d30;"></div><div class="a" style="left:0;top:133px;width:89.5px;height:18px;overflow:hidden"><span class="t" style="left:3.5px;top:3px;font-size:12px;color:#f1f1f1;transform:scaleX(0.941);">Tag</span></div><div class="a" style="left:0px;top:152px;width:90px;height:19px;background:#333337;"></div><div class="a" style="left:0px;top:170.5px;width:189px;height:1px;background:#2d2d30;"></div><div class="a" style="left:0;top:152px;width:89.5px;height:18px;overflow:hidden"><span class="t" style="left:3.5px;top:3px;font-size:12px;color:#f1f1f1;transform:scaleX(0.918);">Text</span></div><span class="t" style="left:93.5px;top:155px;font-size:12px;color:#f1f1f1;font-weight:700;transform:scaleX(0.917);">coolClock1</span><div class="a" style="left:0px;top:189.5px;width:189px;height:1px;background:#2d2d30;"></div><div class="a" style="left:0;top:171px;width:89.5px;height:18px;overflow:hidden"><span class="t" style="left:3.5px;top:3px;font-size:12px;color:#f1f1f1;transform:scaleX(0.961);">TickDelay</span></div><span class="t" style="left:93.5px;top:174px;font-size:12px;color:#f1f1f1;transform:scaleX(0.888);">1000</span><div class="a" style="left:90px;top:0px;width:1px;height:186px;background:#2d2d30;"></div></div>
<svg class="a" style="left:914px;top:542px;" width="9" height="9" viewBox="0 0 9 9"><rect x="0.500" y="0.500" width="8" height="8" fill="none" stroke="#d0d0d0"/><path d="M2.500 4.500H6.500M4.500 2.500V6.500" stroke="#d0d0d0"/></svg>
<div class="a" style="left:1115px;top:481px;width:18px;height:186px;background:#3e3e42;"></div>
<svg class="a" style="left:1119px;top:488px;" width="9" height="5" viewBox="0 0 9 5"><path d="M0 5H9L4.500 0Z" fill="#999"/></svg>
<svg class="a" style="left:1119px;top:656px;" width="9" height="5" viewBox="0 0 9 5"><path d="M0 0H9L4.500 5Z" fill="#999"/></svg>
<div class="a" style="left:1119.5px;top:610px;width:8.5px;height:29.5px;background:#686868;"></div>
<div class="a" style="left:912px;top:667px;width:221px;height:1px;background:#3f3f46;"></div>
<span class="t" style="left:917.5px;top:676px;font-size:12px;color:#f1f1f1;font-weight:700;transform:scaleX(1.030);">Text</span>
<span class="t" style="left:917.5px;top:694px;font-size:12px;color:#f1f1f1;transform:scaleX(0.987);">The text associated with the control.</span>
</body></html>
